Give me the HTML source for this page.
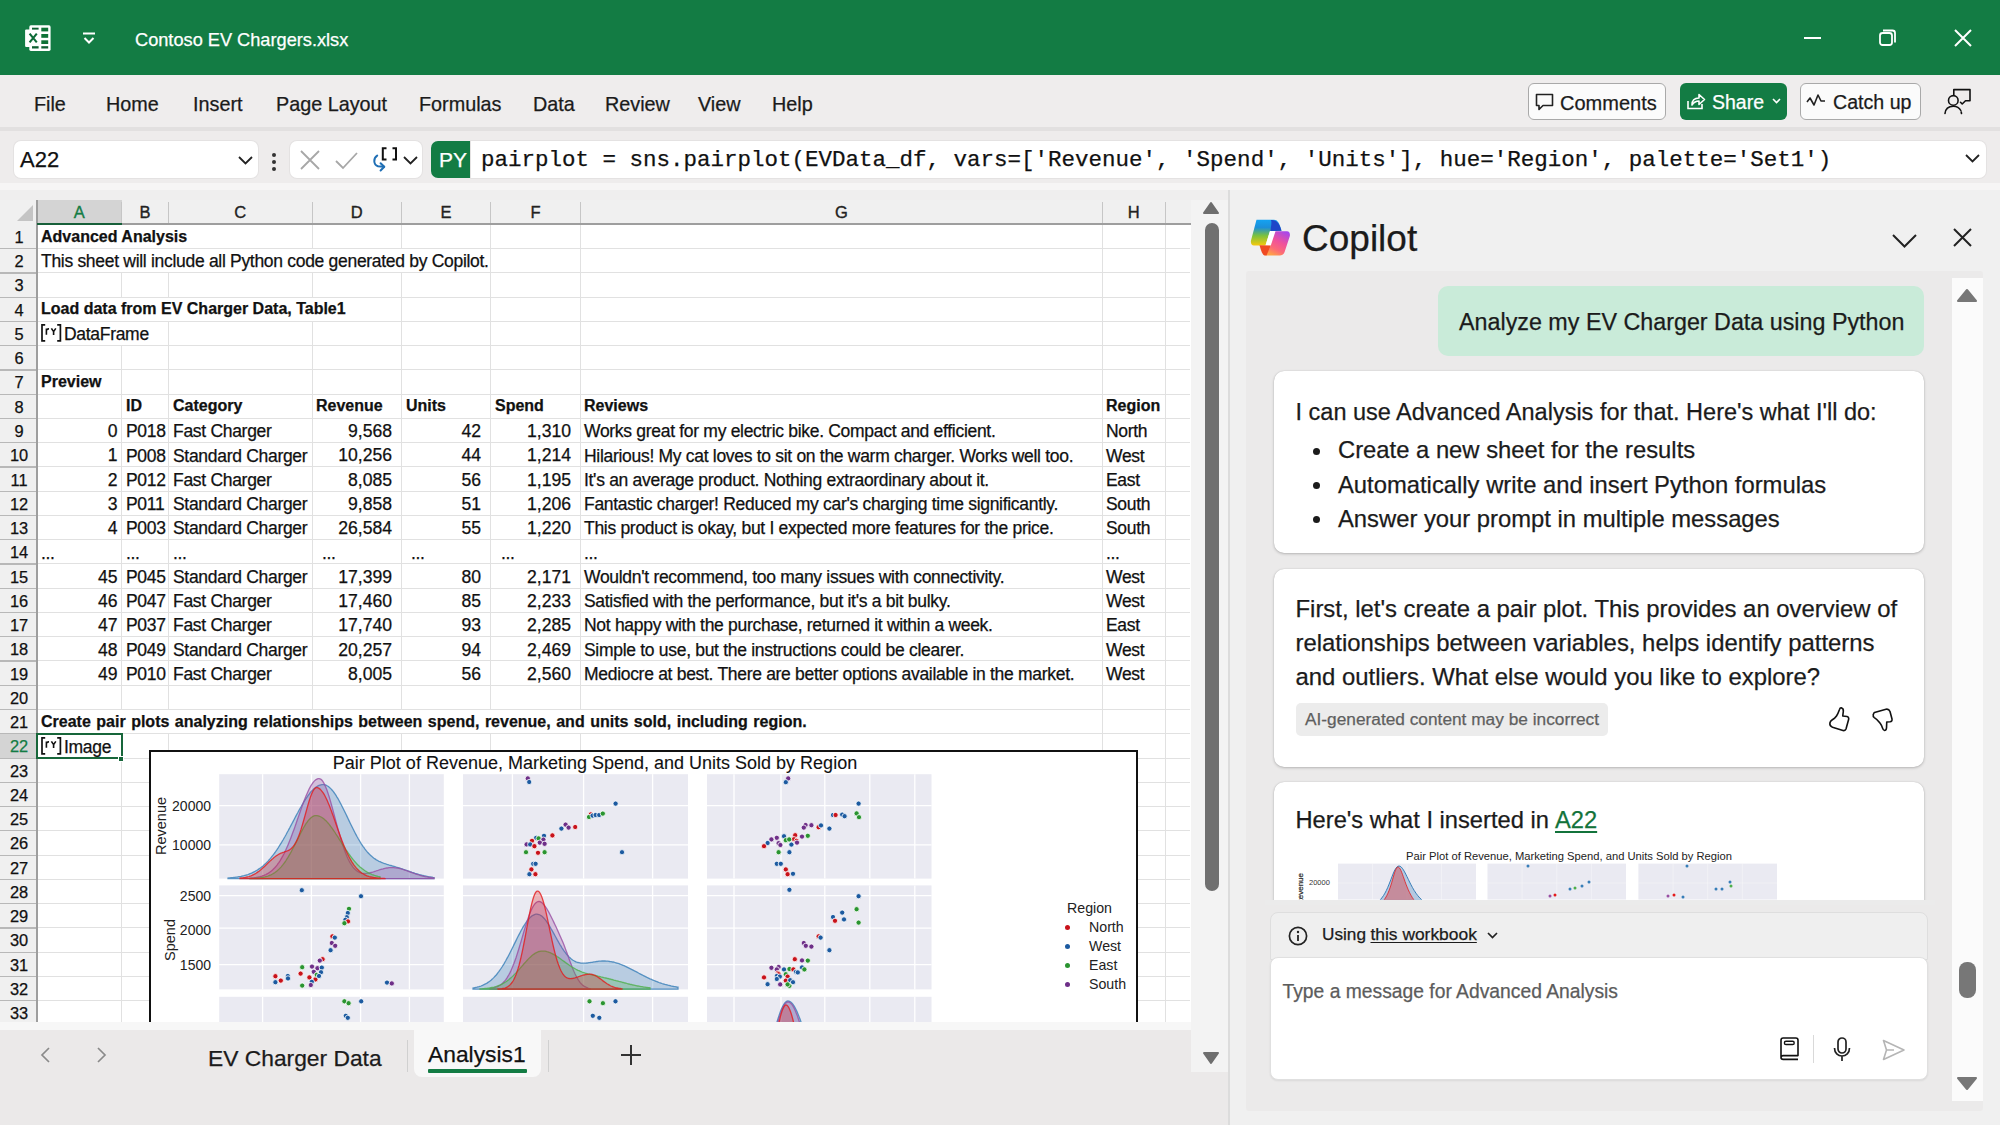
<!DOCTYPE html><html><head><meta charset="utf-8"><style>
html,body{margin:0;padding:0;width:2000px;height:1125px;overflow:hidden;background:#f0f0f0;}
body{position:relative;font-family:"Liberation Sans",sans-serif;}
.t{position:absolute;white-space:pre;-webkit-text-stroke:0.25px currentColor;}
.r{position:absolute;}
svg.r{overflow:visible;}
</style></head><body>
<div class="r" style="left:0.00px;top:0.00px;width:2000.00px;height:75.00px;background:#137c44;"></div>
<svg class="r" style="left:20px;top:20px;" width="36" height="36" viewBox="0 0 36 36"><rect x="9.3" y="5.3" width="21.3" height="25.6" rx="1.6" fill="#fff"/>
<rect x="5.1" y="9.6" width="14" height="17.3" rx="1" fill="#fff"/>
<path d="M9.6 13.6 L16.8 22.4 M16.8 13.6 L9.6 22.4" stroke="#0d6b37" stroke-width="2.1"/>
<rect x="12" y="7.7" width="6.6" height="1.9" fill="#0d5e30"/>
<rect x="12" y="26.2" width="6.6" height="2.3" fill="#0d5e30"/>
<rect x="21.3" y="7.7" width="6.9" height="3.7" fill="#0e7236"/>
<rect x="21.3" y="14" width="6.9" height="3.8" fill="#0e7236"/>
<rect x="21.3" y="20.3" width="6.9" height="3.7" fill="#0e7236"/>
<rect x="21.3" y="26.2" width="6.9" height="2.3" fill="#0d5e30"/></svg>
<svg class="r" style="left:82px;top:32px;" width="14" height="13" viewBox="0 0 14 13"><path d="M1 1.5 H13" stroke="#fff" stroke-width="2"/><path d="M2.5 6 L7 10.5 L11.5 6" fill="none" stroke="#fff" stroke-width="2"/></svg>
<div class="t" style="top:30.59px;font-size:18.2px;line-height:18.2px;color:#fff;font-weight:normal;font-family:'Liberation Sans', sans-serif;left:135.00px;">Contoso EV Chargers.xlsx</div>
<div class="r" style="left:1804.00px;top:37.00px;width:17.00px;height:2.00px;background:#fff;"></div>
<svg class="r" style="left:1879px;top:29px;" width="17" height="17" viewBox="0 0 17 17"><rect x="1" y="4" width="12" height="12" rx="2.5" fill="none" stroke="#fff" stroke-width="1.8"/><path d="M4 1.5 H13.5 A2.5 2.5 0 0 1 16 4 V13.5" fill="none" stroke="#fff" stroke-width="1.8"/></svg>
<svg class="r" style="left:1954px;top:29px;" width="18" height="18" viewBox="0 0 18 18"><path d="M1 1 L17 17 M17 1 L1 17" stroke="#fff" stroke-width="2"/></svg>
<div class="r" style="left:0.00px;top:75.00px;width:2000.00px;height:53.00px;background:#efeded;"></div>
<div class="r" style="left:0.00px;top:127.00px;width:2000.00px;height:4.00px;background:#e2e0e0;"></div>
<div class="t" style="top:95.24px;font-size:19.8px;line-height:19.8px;color:#1b1b1b;font-weight:normal;font-family:'Liberation Sans', sans-serif;left:34.00px;">File</div>
<div class="t" style="top:95.24px;font-size:19.8px;line-height:19.8px;color:#1b1b1b;font-weight:normal;font-family:'Liberation Sans', sans-serif;left:106.00px;">Home</div>
<div class="t" style="top:95.24px;font-size:19.8px;line-height:19.8px;color:#1b1b1b;font-weight:normal;font-family:'Liberation Sans', sans-serif;left:193.00px;">Insert</div>
<div class="t" style="top:95.24px;font-size:19.8px;line-height:19.8px;color:#1b1b1b;font-weight:normal;font-family:'Liberation Sans', sans-serif;left:276.00px;">Page Layout</div>
<div class="t" style="top:95.24px;font-size:19.8px;line-height:19.8px;color:#1b1b1b;font-weight:normal;font-family:'Liberation Sans', sans-serif;left:419.00px;">Formulas</div>
<div class="t" style="top:95.24px;font-size:19.8px;line-height:19.8px;color:#1b1b1b;font-weight:normal;font-family:'Liberation Sans', sans-serif;left:533.00px;">Data</div>
<div class="t" style="top:95.24px;font-size:19.8px;line-height:19.8px;color:#1b1b1b;font-weight:normal;font-family:'Liberation Sans', sans-serif;left:605.00px;">Review</div>
<div class="t" style="top:95.24px;font-size:19.8px;line-height:19.8px;color:#1b1b1b;font-weight:normal;font-family:'Liberation Sans', sans-serif;left:698.00px;">View</div>
<div class="t" style="top:95.24px;font-size:19.8px;line-height:19.8px;color:#1b1b1b;font-weight:normal;font-family:'Liberation Sans', sans-serif;left:772.00px;">Help</div>
<div class="r" style="left:1528.00px;top:83.00px;width:138.00px;height:37.00px;background:#fbfbfb;border:1px solid #a9a9a9;border-radius:6px;box-sizing:border-box;"></div>
<svg class="r" style="left:1535px;top:93px;" width="19" height="18" viewBox="0 0 19 18"><path d="M1.5 1.5 H17.5 V12.5 H8 L4 16.5 V12.5 H1.5 Z" fill="none" stroke="#222" stroke-width="1.6" stroke-linejoin="round"/></svg>
<div class="t" style="top:93.07px;font-size:20px;line-height:20px;color:#1b1b1b;font-weight:normal;font-family:'Liberation Sans', sans-serif;left:1560.00px;">Comments</div>
<div class="r" style="left:1680.00px;top:83.00px;width:107.00px;height:37.00px;background:#137c44;border-radius:6px;"></div>
<svg class="r" style="left:1686px;top:92px;" width="20" height="19" viewBox="0 0 20 19"><path d="M2 9 V16.5 H16 V12" fill="none" stroke="#fff" stroke-width="1.6"/><path d="M6 13 C6 8 9 6 13 6 V2.5 L18.5 7.5 L13 12.5 V9 C10 9 8 10 6 13 Z" fill="none" stroke="#fff" stroke-width="1.6" stroke-linejoin="round"/></svg>
<div class="t" style="top:93.49px;font-size:19.5px;line-height:19.5px;color:#fff;font-weight:normal;font-family:'Liberation Sans', sans-serif;left:1712.00px;">Share</div>
<svg class="r" style="left:1772px;top:98px;" width="9" height="6" viewBox="0 0 9 6"><path d="M1 1 L4.5 4.5 L8 1" fill="none" stroke="#fff" stroke-width="1.6"/></svg>
<div class="r" style="left:1800.00px;top:83.00px;width:121.00px;height:37.00px;background:#fbfbfb;border:1px solid #a9a9a9;border-radius:6px;box-sizing:border-box;"></div>
<svg class="r" style="left:1806px;top:93px;" width="20" height="14" viewBox="0 0 20 14"><path d="M1 9 L4 5 L8 12 L12 2 L15 8 L19 8" fill="none" stroke="#222" stroke-width="1.6" stroke-linejoin="round"/></svg>
<div class="t" style="top:93.41px;font-size:19.6px;line-height:19.6px;color:#1b1b1b;font-weight:normal;font-family:'Liberation Sans', sans-serif;left:1833.00px;">Catch up</div>
<svg class="r" style="left:1940px;top:85px;" width="32" height="30" viewBox="0 0 32 30"><circle cx="13.3" cy="15.4" r="4.8" fill="none" stroke="#111" stroke-width="1.6"/><path d="M5 28.5 C5.5 23.5 9 21.2 13.3 21.2 C16.5 21.2 19.3 22.5 20.8 25.5 M21.5 28.5 L21.2 27" fill="none" stroke="#111" stroke-width="1.6" stroke-linecap="round"/><path d="M13.8 10 V4.6 H30 V15.8 H25.5 L22.2 19 L20.5 17.3" fill="none" stroke="#111" stroke-width="1.6" stroke-linejoin="round" stroke-linecap="round"/></svg>
<div class="r" style="left:0.00px;top:131.00px;width:2000.00px;height:52.00px;background:#eeecec;"></div>
<div class="r" style="left:0.00px;top:183.00px;width:2000.00px;height:7.00px;background:#f6f5f5;"></div>
<div class="r" style="left:0.00px;top:190.00px;width:2000.00px;height:10.00px;background:#efeeee;"></div>
<div class="r" style="left:14.00px;top:141.00px;width:244.00px;height:37.00px;background:#fff;border-radius:7px;box-shadow:0 0 0 1px #e4e2e2;"></div>
<div class="t" style="top:149.38px;font-size:22px;line-height:22px;color:#111;font-weight:normal;font-family:'Liberation Sans', sans-serif;left:20.00px;">A22</div>
<svg class="r" style="left:238px;top:156px;" width="15" height="9" viewBox="0 0 15 9"><path d="M1 1 L7.5 7.5 L14 1" fill="none" stroke="#222" stroke-width="1.8"/></svg>
<div class="r" style="left:272.00px;top:153.00px;width:4.00px;height:3.50px;background:#333;border-radius:2px;"></div>
<div class="r" style="left:272.00px;top:160.00px;width:4.00px;height:3.50px;background:#333;border-radius:2px;"></div>
<div class="r" style="left:272.00px;top:167.00px;width:4.00px;height:3.50px;background:#333;border-radius:2px;"></div>
<div class="r" style="left:290.00px;top:141.00px;width:132.00px;height:37.00px;background:#fff;border-radius:7px;box-shadow:0 0 0 1px #e4e2e2;"></div>
<svg class="r" style="left:300px;top:150px;" width="20" height="20" viewBox="0 0 20 20"><path d="M1 1 L19 19 M19 1 L1 19" stroke="#a7a7a7" stroke-width="1.8"/></svg>
<svg class="r" style="left:335px;top:150px;" width="23" height="20" viewBox="0 0 23 20"><path d="M1 11 L8 18 L22 3" fill="none" stroke="#a7a7a7" stroke-width="1.8"/></svg>
<svg class="r" style="left:371px;top:147px;" width="27" height="25" viewBox="0 0 27 25"><path d="M6.2 8.6 C2.2 11 2.2 17.5 7 19.3 L13 19.8" fill="none" stroke="#1f6fb5" stroke-width="2" stroke-linecap="round"/><path d="M9.6 16.2 L13.3 19.8 L9.6 23.5" fill="none" stroke="#1f6fb5" stroke-width="2" stroke-linecap="round" stroke-linejoin="round"/><path d="M15.5 1.2 H11.8 V12.4 H15.5 M21.5 1.2 H25 V12.4 H21.5" fill="none" stroke="#111" stroke-width="2"/></svg>
<svg class="r" style="left:403px;top:156px;" width="15" height="9" viewBox="0 0 15 9"><path d="M1 1 L7.5 7.5 L14 1" fill="none" stroke="#222" stroke-width="1.8"/></svg>
<div class="r" style="left:431.00px;top:141.00px;width:40.00px;height:37.00px;background:#137c44;border-radius:7px 0 0 7px;"></div>
<div class="t" style="top:149.22px;font-size:21px;line-height:21px;color:#fff;font-weight:normal;font-family:'Liberation Sans', sans-serif;left:439.00px;">PY</div>
<div class="r" style="left:471.00px;top:141.00px;width:1515.00px;height:37.00px;background:#fff;border-radius:0 7px 7px 0;box-shadow:0 0 0 1px #e4e2e2;"></div>
<div class="t" style="top:148.95px;font-size:22.5px;line-height:22.5px;color:#111;font-weight:normal;font-family:'Liberation Mono', monospace;left:481.00px;">pairplot = sns.pairplot(EVData_df, vars=['Revenue', 'Spend', 'Units'], hue='Region', palette='Set1')</div>
<svg class="r" style="left:1965px;top:154px;" width="15" height="9" viewBox="0 0 15 9"><path d="M1 1 L7.5 7.5 L14 1" fill="none" stroke="#222" stroke-width="1.8"/></svg>
<div class="r" style="left:0.00px;top:200.00px;width:1195.00px;height:822.00px;background:#fff;"></div>
<div class="r" style="left:0.00px;top:200.00px;width:1190.50px;height:24.30px;background:#f0f0f0;"></div>
<div class="r" style="left:0.00px;top:224.30px;width:37.00px;height:797.70px;background:#f0f0f0;"></div>
<div class="r" style="left:37.00px;top:200.00px;width:84.50px;height:24.30px;background:#d4d4d4;"></div>
<div class="r" style="left:0.00px;top:733.76px;width:37.00px;height:24.26px;background:#d4d4d4;"></div>
<svg class="r" style="left:17px;top:205px;" width="16" height="16" viewBox="0 0 16 16"><path d="M16 0 V16 H0 Z" fill="#c4c4c4"/></svg>
<div class="r" style="left:37px;top:248.06px;width:1153px;height:1px;background:#e1e1e1;"></div>
<div class="r" style="left:0px;top:248.06px;width:37px;height:1.2px;background:#b8b8b8;"></div>
<div class="r" style="left:37px;top:272.32px;width:1153px;height:1px;background:#e1e1e1;"></div>
<div class="r" style="left:0px;top:272.32px;width:37px;height:1.2px;background:#b8b8b8;"></div>
<div class="r" style="left:37px;top:296.58px;width:1153px;height:1px;background:#e1e1e1;"></div>
<div class="r" style="left:0px;top:296.58px;width:37px;height:1.2px;background:#b8b8b8;"></div>
<div class="r" style="left:37px;top:320.84px;width:1153px;height:1px;background:#e1e1e1;"></div>
<div class="r" style="left:0px;top:320.84px;width:37px;height:1.2px;background:#b8b8b8;"></div>
<div class="r" style="left:37px;top:345.10px;width:1153px;height:1px;background:#e1e1e1;"></div>
<div class="r" style="left:0px;top:345.10px;width:37px;height:1.2px;background:#b8b8b8;"></div>
<div class="r" style="left:37px;top:369.36px;width:1153px;height:1px;background:#e1e1e1;"></div>
<div class="r" style="left:0px;top:369.36px;width:37px;height:1.2px;background:#b8b8b8;"></div>
<div class="r" style="left:37px;top:393.62px;width:1153px;height:1px;background:#e1e1e1;"></div>
<div class="r" style="left:0px;top:393.62px;width:37px;height:1.2px;background:#b8b8b8;"></div>
<div class="r" style="left:37px;top:417.88px;width:1153px;height:1px;background:#e1e1e1;"></div>
<div class="r" style="left:0px;top:417.88px;width:37px;height:1.2px;background:#b8b8b8;"></div>
<div class="r" style="left:37px;top:442.14px;width:1153px;height:1px;background:#e1e1e1;"></div>
<div class="r" style="left:0px;top:442.14px;width:37px;height:1.2px;background:#b8b8b8;"></div>
<div class="r" style="left:37px;top:466.40px;width:1153px;height:1px;background:#e1e1e1;"></div>
<div class="r" style="left:0px;top:466.40px;width:37px;height:1.2px;background:#b8b8b8;"></div>
<div class="r" style="left:37px;top:490.66px;width:1153px;height:1px;background:#e1e1e1;"></div>
<div class="r" style="left:0px;top:490.66px;width:37px;height:1.2px;background:#b8b8b8;"></div>
<div class="r" style="left:37px;top:514.92px;width:1153px;height:1px;background:#e1e1e1;"></div>
<div class="r" style="left:0px;top:514.92px;width:37px;height:1.2px;background:#b8b8b8;"></div>
<div class="r" style="left:37px;top:539.18px;width:1153px;height:1px;background:#e1e1e1;"></div>
<div class="r" style="left:0px;top:539.18px;width:37px;height:1.2px;background:#b8b8b8;"></div>
<div class="r" style="left:37px;top:563.44px;width:1153px;height:1px;background:#e1e1e1;"></div>
<div class="r" style="left:0px;top:563.44px;width:37px;height:1.2px;background:#b8b8b8;"></div>
<div class="r" style="left:37px;top:587.70px;width:1153px;height:1px;background:#e1e1e1;"></div>
<div class="r" style="left:0px;top:587.70px;width:37px;height:1.2px;background:#b8b8b8;"></div>
<div class="r" style="left:37px;top:611.96px;width:1153px;height:1px;background:#e1e1e1;"></div>
<div class="r" style="left:0px;top:611.96px;width:37px;height:1.2px;background:#b8b8b8;"></div>
<div class="r" style="left:37px;top:636.22px;width:1153px;height:1px;background:#e1e1e1;"></div>
<div class="r" style="left:0px;top:636.22px;width:37px;height:1.2px;background:#b8b8b8;"></div>
<div class="r" style="left:37px;top:660.48px;width:1153px;height:1px;background:#e1e1e1;"></div>
<div class="r" style="left:0px;top:660.48px;width:37px;height:1.2px;background:#b8b8b8;"></div>
<div class="r" style="left:37px;top:684.74px;width:1153px;height:1px;background:#e1e1e1;"></div>
<div class="r" style="left:0px;top:684.74px;width:37px;height:1.2px;background:#b8b8b8;"></div>
<div class="r" style="left:37px;top:709.00px;width:1153px;height:1px;background:#e1e1e1;"></div>
<div class="r" style="left:0px;top:709.00px;width:37px;height:1.2px;background:#b8b8b8;"></div>
<div class="r" style="left:37px;top:733.26px;width:1153px;height:1px;background:#e1e1e1;"></div>
<div class="r" style="left:0px;top:733.26px;width:37px;height:1.2px;background:#b8b8b8;"></div>
<div class="r" style="left:37px;top:757.52px;width:1153px;height:1px;background:#e1e1e1;"></div>
<div class="r" style="left:0px;top:757.52px;width:37px;height:1.2px;background:#b8b8b8;"></div>
<div class="r" style="left:37px;top:781.78px;width:1153px;height:1px;background:#e1e1e1;"></div>
<div class="r" style="left:0px;top:781.78px;width:37px;height:1.2px;background:#b8b8b8;"></div>
<div class="r" style="left:37px;top:806.04px;width:1153px;height:1px;background:#e1e1e1;"></div>
<div class="r" style="left:0px;top:806.04px;width:37px;height:1.2px;background:#b8b8b8;"></div>
<div class="r" style="left:37px;top:830.30px;width:1153px;height:1px;background:#e1e1e1;"></div>
<div class="r" style="left:0px;top:830.30px;width:37px;height:1.2px;background:#b8b8b8;"></div>
<div class="r" style="left:37px;top:854.56px;width:1153px;height:1px;background:#e1e1e1;"></div>
<div class="r" style="left:0px;top:854.56px;width:37px;height:1.2px;background:#b8b8b8;"></div>
<div class="r" style="left:37px;top:878.82px;width:1153px;height:1px;background:#e1e1e1;"></div>
<div class="r" style="left:0px;top:878.82px;width:37px;height:1.2px;background:#b8b8b8;"></div>
<div class="r" style="left:37px;top:903.08px;width:1153px;height:1px;background:#e1e1e1;"></div>
<div class="r" style="left:0px;top:903.08px;width:37px;height:1.2px;background:#b8b8b8;"></div>
<div class="r" style="left:37px;top:927.34px;width:1153px;height:1px;background:#e1e1e1;"></div>
<div class="r" style="left:0px;top:927.34px;width:37px;height:1.2px;background:#b8b8b8;"></div>
<div class="r" style="left:37px;top:951.60px;width:1153px;height:1px;background:#e1e1e1;"></div>
<div class="r" style="left:0px;top:951.60px;width:37px;height:1.2px;background:#b8b8b8;"></div>
<div class="r" style="left:37px;top:975.86px;width:1153px;height:1px;background:#e1e1e1;"></div>
<div class="r" style="left:0px;top:975.86px;width:37px;height:1.2px;background:#b8b8b8;"></div>
<div class="r" style="left:37px;top:1000.12px;width:1153px;height:1px;background:#e1e1e1;"></div>
<div class="r" style="left:0px;top:1000.12px;width:37px;height:1.2px;background:#b8b8b8;"></div>
<div class="r" style="left:121.00px;top:224.3px;width:1px;height:797.7px;background:#e1e1e1;"></div>
<div class="r" style="left:121.00px;top:202px;width:1px;height:22.30000000000001px;background:#c6c6c6;"></div>
<div class="r" style="left:168.00px;top:224.3px;width:1px;height:797.7px;background:#e1e1e1;"></div>
<div class="r" style="left:168.00px;top:202px;width:1px;height:22.30000000000001px;background:#c6c6c6;"></div>
<div class="r" style="left:311.50px;top:224.3px;width:1px;height:797.7px;background:#e1e1e1;"></div>
<div class="r" style="left:311.50px;top:202px;width:1px;height:22.30000000000001px;background:#c6c6c6;"></div>
<div class="r" style="left:400.80px;top:224.3px;width:1px;height:797.7px;background:#e1e1e1;"></div>
<div class="r" style="left:400.80px;top:202px;width:1px;height:22.30000000000001px;background:#c6c6c6;"></div>
<div class="r" style="left:490.20px;top:224.3px;width:1px;height:797.7px;background:#e1e1e1;"></div>
<div class="r" style="left:490.20px;top:202px;width:1px;height:22.30000000000001px;background:#c6c6c6;"></div>
<div class="r" style="left:579.80px;top:224.3px;width:1px;height:797.7px;background:#e1e1e1;"></div>
<div class="r" style="left:579.80px;top:202px;width:1px;height:22.30000000000001px;background:#c6c6c6;"></div>
<div class="r" style="left:1101.80px;top:224.3px;width:1px;height:797.7px;background:#e1e1e1;"></div>
<div class="r" style="left:1101.80px;top:202px;width:1px;height:22.30000000000001px;background:#c6c6c6;"></div>
<div class="r" style="left:1164.80px;top:224.3px;width:1px;height:797.7px;background:#e1e1e1;"></div>
<div class="r" style="left:1164.80px;top:202px;width:1px;height:22.30000000000001px;background:#c6c6c6;"></div>
<div class="r" style="left:37.00px;top:222.80px;width:1153.50px;height:2.00px;background:#9e9e9e;"></div>
<div class="r" style="left:36.00px;top:200.00px;width:1.50px;height:822.00px;background:#9e9e9e;"></div>
<div class="r" style="left:37.00px;top:222.50px;width:84.50px;height:2.00px;background:#17603a;"></div>
<div class="r" style="left:35.50px;top:733.76px;width:2.00px;height:24.26px;background:#137c44;"></div>
<div class="t" style="top:204.03px;font-size:16.5px;line-height:16.5px;color:#137c44;font-weight:normal;font-family:'Liberation Sans', sans-serif;left:-420.75px;width:1000px;text-align:center;-webkit-text-stroke:0.35px;">A</div>
<div class="t" style="top:204.03px;font-size:16.5px;line-height:16.5px;color:#222;font-weight:normal;font-family:'Liberation Sans', sans-serif;left:-355.00px;width:1000px;text-align:center;-webkit-text-stroke:0.35px;">B</div>
<div class="t" style="top:204.03px;font-size:16.5px;line-height:16.5px;color:#222;font-weight:normal;font-family:'Liberation Sans', sans-serif;left:-259.75px;width:1000px;text-align:center;-webkit-text-stroke:0.35px;">C</div>
<div class="t" style="top:204.03px;font-size:16.5px;line-height:16.5px;color:#222;font-weight:normal;font-family:'Liberation Sans', sans-serif;left:-143.35px;width:1000px;text-align:center;-webkit-text-stroke:0.35px;">D</div>
<div class="t" style="top:204.03px;font-size:16.5px;line-height:16.5px;color:#222;font-weight:normal;font-family:'Liberation Sans', sans-serif;left:-54.00px;width:1000px;text-align:center;-webkit-text-stroke:0.35px;">E</div>
<div class="t" style="top:204.03px;font-size:16.5px;line-height:16.5px;color:#222;font-weight:normal;font-family:'Liberation Sans', sans-serif;left:35.50px;width:1000px;text-align:center;-webkit-text-stroke:0.35px;">F</div>
<div class="t" style="top:204.03px;font-size:16.5px;line-height:16.5px;color:#222;font-weight:normal;font-family:'Liberation Sans', sans-serif;left:341.30px;width:1000px;text-align:center;-webkit-text-stroke:0.35px;">G</div>
<div class="t" style="top:204.03px;font-size:16.5px;line-height:16.5px;color:#222;font-weight:normal;font-family:'Liberation Sans', sans-serif;left:633.80px;width:1000px;text-align:center;-webkit-text-stroke:0.35px;">H</div>
<div class="t" style="top:228.92px;font-size:16.4px;line-height:16.4px;color:#111;font-weight:normal;font-family:'Liberation Sans', sans-serif;left:-481.00px;width:1000px;text-align:center;">1</div>
<div class="t" style="top:253.18px;font-size:16.4px;line-height:16.4px;color:#111;font-weight:normal;font-family:'Liberation Sans', sans-serif;left:-481.00px;width:1000px;text-align:center;">2</div>
<div class="t" style="top:277.44px;font-size:16.4px;line-height:16.4px;color:#111;font-weight:normal;font-family:'Liberation Sans', sans-serif;left:-481.00px;width:1000px;text-align:center;">3</div>
<div class="t" style="top:301.70px;font-size:16.4px;line-height:16.4px;color:#111;font-weight:normal;font-family:'Liberation Sans', sans-serif;left:-481.00px;width:1000px;text-align:center;">4</div>
<div class="t" style="top:325.96px;font-size:16.4px;line-height:16.4px;color:#111;font-weight:normal;font-family:'Liberation Sans', sans-serif;left:-481.00px;width:1000px;text-align:center;">5</div>
<div class="t" style="top:350.22px;font-size:16.4px;line-height:16.4px;color:#111;font-weight:normal;font-family:'Liberation Sans', sans-serif;left:-481.00px;width:1000px;text-align:center;">6</div>
<div class="t" style="top:374.48px;font-size:16.4px;line-height:16.4px;color:#111;font-weight:normal;font-family:'Liberation Sans', sans-serif;left:-481.00px;width:1000px;text-align:center;">7</div>
<div class="t" style="top:398.74px;font-size:16.4px;line-height:16.4px;color:#111;font-weight:normal;font-family:'Liberation Sans', sans-serif;left:-481.00px;width:1000px;text-align:center;">8</div>
<div class="t" style="top:423.00px;font-size:16.4px;line-height:16.4px;color:#111;font-weight:normal;font-family:'Liberation Sans', sans-serif;left:-481.00px;width:1000px;text-align:center;">9</div>
<div class="t" style="top:447.26px;font-size:16.4px;line-height:16.4px;color:#111;font-weight:normal;font-family:'Liberation Sans', sans-serif;left:-481.00px;width:1000px;text-align:center;">10</div>
<div class="t" style="top:471.52px;font-size:16.4px;line-height:16.4px;color:#111;font-weight:normal;font-family:'Liberation Sans', sans-serif;left:-481.00px;width:1000px;text-align:center;">11</div>
<div class="t" style="top:495.78px;font-size:16.4px;line-height:16.4px;color:#111;font-weight:normal;font-family:'Liberation Sans', sans-serif;left:-481.00px;width:1000px;text-align:center;">12</div>
<div class="t" style="top:520.04px;font-size:16.4px;line-height:16.4px;color:#111;font-weight:normal;font-family:'Liberation Sans', sans-serif;left:-481.00px;width:1000px;text-align:center;">13</div>
<div class="t" style="top:544.30px;font-size:16.4px;line-height:16.4px;color:#111;font-weight:normal;font-family:'Liberation Sans', sans-serif;left:-481.00px;width:1000px;text-align:center;">14</div>
<div class="t" style="top:568.56px;font-size:16.4px;line-height:16.4px;color:#111;font-weight:normal;font-family:'Liberation Sans', sans-serif;left:-481.00px;width:1000px;text-align:center;">15</div>
<div class="t" style="top:592.82px;font-size:16.4px;line-height:16.4px;color:#111;font-weight:normal;font-family:'Liberation Sans', sans-serif;left:-481.00px;width:1000px;text-align:center;">16</div>
<div class="t" style="top:617.08px;font-size:16.4px;line-height:16.4px;color:#111;font-weight:normal;font-family:'Liberation Sans', sans-serif;left:-481.00px;width:1000px;text-align:center;">17</div>
<div class="t" style="top:641.34px;font-size:16.4px;line-height:16.4px;color:#111;font-weight:normal;font-family:'Liberation Sans', sans-serif;left:-481.00px;width:1000px;text-align:center;">18</div>
<div class="t" style="top:665.60px;font-size:16.4px;line-height:16.4px;color:#111;font-weight:normal;font-family:'Liberation Sans', sans-serif;left:-481.00px;width:1000px;text-align:center;">19</div>
<div class="t" style="top:689.86px;font-size:16.4px;line-height:16.4px;color:#111;font-weight:normal;font-family:'Liberation Sans', sans-serif;left:-481.00px;width:1000px;text-align:center;">20</div>
<div class="t" style="top:714.12px;font-size:16.4px;line-height:16.4px;color:#111;font-weight:normal;font-family:'Liberation Sans', sans-serif;left:-481.00px;width:1000px;text-align:center;">21</div>
<div class="t" style="top:738.38px;font-size:16.4px;line-height:16.4px;color:#137c44;font-weight:normal;font-family:'Liberation Sans', sans-serif;left:-481.00px;width:1000px;text-align:center;">22</div>
<div class="t" style="top:762.64px;font-size:16.4px;line-height:16.4px;color:#111;font-weight:normal;font-family:'Liberation Sans', sans-serif;left:-481.00px;width:1000px;text-align:center;">23</div>
<div class="t" style="top:786.90px;font-size:16.4px;line-height:16.4px;color:#111;font-weight:normal;font-family:'Liberation Sans', sans-serif;left:-481.00px;width:1000px;text-align:center;">24</div>
<div class="t" style="top:811.16px;font-size:16.4px;line-height:16.4px;color:#111;font-weight:normal;font-family:'Liberation Sans', sans-serif;left:-481.00px;width:1000px;text-align:center;">25</div>
<div class="t" style="top:835.42px;font-size:16.4px;line-height:16.4px;color:#111;font-weight:normal;font-family:'Liberation Sans', sans-serif;left:-481.00px;width:1000px;text-align:center;">26</div>
<div class="t" style="top:859.68px;font-size:16.4px;line-height:16.4px;color:#111;font-weight:normal;font-family:'Liberation Sans', sans-serif;left:-481.00px;width:1000px;text-align:center;">27</div>
<div class="t" style="top:883.94px;font-size:16.4px;line-height:16.4px;color:#111;font-weight:normal;font-family:'Liberation Sans', sans-serif;left:-481.00px;width:1000px;text-align:center;">28</div>
<div class="t" style="top:908.20px;font-size:16.4px;line-height:16.4px;color:#111;font-weight:normal;font-family:'Liberation Sans', sans-serif;left:-481.00px;width:1000px;text-align:center;">29</div>
<div class="t" style="top:932.46px;font-size:16.4px;line-height:16.4px;color:#111;font-weight:normal;font-family:'Liberation Sans', sans-serif;left:-481.00px;width:1000px;text-align:center;">30</div>
<div class="t" style="top:956.72px;font-size:16.4px;line-height:16.4px;color:#111;font-weight:normal;font-family:'Liberation Sans', sans-serif;left:-481.00px;width:1000px;text-align:center;">31</div>
<div class="t" style="top:980.98px;font-size:16.4px;line-height:16.4px;color:#111;font-weight:normal;font-family:'Liberation Sans', sans-serif;left:-481.00px;width:1000px;text-align:center;">32</div>
<div class="t" style="top:1005.24px;font-size:16.4px;line-height:16.4px;color:#111;font-weight:normal;font-family:'Liberation Sans', sans-serif;left:-481.00px;width:1000px;text-align:center;">33</div>
<div class="r" style="left:120.00px;top:224.90px;width:50.00px;height:23.06px;background:#fff;"></div>
<div class="r" style="left:120.00px;top:249.16px;width:283.00px;height:23.06px;background:#fff;"></div>
<div class="r" style="left:120.00px;top:297.68px;width:194.00px;height:23.06px;background:#fff;"></div>
<div class="r" style="left:120.00px;top:321.94px;width:3.00px;height:23.06px;background:#fff;"></div>
<div class="r" style="left:120.00px;top:710.10px;width:462.00px;height:23.06px;background:#fff;"></div>
<div class="t" style="top:228.66px;font-size:16px;line-height:16px;color:#111;font-weight:bold;font-family:'Liberation Sans', sans-serif;left:41.00px;">Advanced Analysis</div>
<div class="t" style="top:253.45px;font-size:17.5px;line-height:17.5px;color:#111;font-weight:normal;font-family:'Liberation Sans', sans-serif;left:41.00px;letter-spacing:-0.3px;">This sheet will include all Python code generated by Copilot.</div>
<div class="t" style="top:301.44px;font-size:16px;line-height:16px;color:#111;font-weight:bold;font-family:'Liberation Sans', sans-serif;left:41.00px;">Load data from EV Charger Data, Table1</div>
<div class="t" style="top:374.22px;font-size:16px;line-height:16px;color:#111;font-weight:bold;font-family:'Liberation Sans', sans-serif;left:41.00px;">Preview</div>
<div class="t" style="top:713.86px;font-size:16px;line-height:16px;color:#111;font-weight:bold;font-family:'Liberation Sans', sans-serif;left:41.00px;word-spacing:1.05px;">Create pair plots analyzing relationships between spend, revenue, and units sold, including region.</div>
<svg class="r" style="left:40px;top:324.24px;" width="22" height="18" viewBox="0 0 22 18"><path d="M5.2 0.8 H2 V16.8 H5.2 M17.2 0.8 H20.4 V16.8 H17.2" fill="none" stroke="#111" stroke-width="1.7"/><path d="M6.4 4.6 V10.8 M6.4 6.6 C6.8 5.2 7.8 4.8 9 4.9" fill="none" stroke="#111" stroke-width="1.6"/><path d="M11.4 4.4 L13.6 7.6 L15.8 4.4 M13.6 7.6 V11" fill="none" stroke="#111" stroke-width="1.6"/></svg>
<div class="t" style="top:326.23px;font-size:17.5px;line-height:17.5px;color:#111;font-weight:normal;font-family:'Liberation Sans', sans-serif;left:64.00px;letter-spacing:-0.3px;">DataFrame</div>
<svg class="r" style="left:40px;top:736.66px;" width="22" height="18" viewBox="0 0 22 18"><path d="M5.2 0.8 H2 V16.8 H5.2 M17.2 0.8 H20.4 V16.8 H17.2" fill="none" stroke="#111" stroke-width="1.7"/><path d="M6.4 4.6 V10.8 M6.4 6.6 C6.8 5.2 7.8 4.8 9 4.9" fill="none" stroke="#111" stroke-width="1.6"/><path d="M11.4 4.4 L13.6 7.6 L15.8 4.4 M13.6 7.6 V11" fill="none" stroke="#111" stroke-width="1.6"/></svg>
<div class="t" style="top:738.65px;font-size:17.5px;line-height:17.5px;color:#111;font-weight:normal;font-family:'Liberation Sans', sans-serif;left:64.00px;letter-spacing:-0.3px;">Image</div>
<div class="t" style="top:398.48px;font-size:16px;line-height:16px;color:#111;font-weight:bold;font-family:'Liberation Sans', sans-serif;left:126.00px;">ID</div>
<div class="t" style="top:398.48px;font-size:16px;line-height:16px;color:#111;font-weight:bold;font-family:'Liberation Sans', sans-serif;left:173.00px;">Category</div>
<div class="t" style="top:398.48px;font-size:16px;line-height:16px;color:#111;font-weight:bold;font-family:'Liberation Sans', sans-serif;left:316.00px;">Revenue</div>
<div class="t" style="top:398.48px;font-size:16px;line-height:16px;color:#111;font-weight:bold;font-family:'Liberation Sans', sans-serif;left:406.00px;">Units</div>
<div class="t" style="top:398.48px;font-size:16px;line-height:16px;color:#111;font-weight:bold;font-family:'Liberation Sans', sans-serif;left:495.00px;">Spend</div>
<div class="t" style="top:398.48px;font-size:16px;line-height:16px;color:#111;font-weight:bold;font-family:'Liberation Sans', sans-serif;left:584.00px;">Reviews</div>
<div class="t" style="top:398.48px;font-size:16px;line-height:16px;color:#111;font-weight:bold;font-family:'Liberation Sans', sans-serif;left:1106.00px;">Region</div>
<div class="t" style="top:423.18px;font-size:17.6px;line-height:17.6px;color:#111;font-weight:normal;font-family:'Liberation Sans', sans-serif;right:1882.50px;">0</div>
<div class="t" style="top:423.27px;font-size:17.5px;line-height:17.5px;color:#111;font-weight:normal;font-family:'Liberation Sans', sans-serif;left:126.00px;letter-spacing:-0.3px;">P018</div>
<div class="t" style="top:423.27px;font-size:17.5px;line-height:17.5px;color:#111;font-weight:normal;font-family:'Liberation Sans', sans-serif;left:173.00px;letter-spacing:-0.3px;">Fast Charger</div>
<div class="t" style="top:423.18px;font-size:17.6px;line-height:17.6px;color:#111;font-weight:normal;font-family:'Liberation Sans', sans-serif;right:1608.00px;">9,568</div>
<div class="t" style="top:423.18px;font-size:17.6px;line-height:17.6px;color:#111;font-weight:normal;font-family:'Liberation Sans', sans-serif;right:1519.00px;">42</div>
<div class="t" style="top:423.18px;font-size:17.6px;line-height:17.6px;color:#111;font-weight:normal;font-family:'Liberation Sans', sans-serif;right:1429.00px;">1,310</div>
<div class="t" style="top:423.27px;font-size:17.5px;line-height:17.5px;color:#111;font-weight:normal;font-family:'Liberation Sans', sans-serif;left:584.00px;letter-spacing:-0.3px;">Works great for my electric bike. Compact and efficient.</div>
<div class="t" style="top:423.27px;font-size:17.5px;line-height:17.5px;color:#111;font-weight:normal;font-family:'Liberation Sans', sans-serif;left:1106.00px;letter-spacing:-0.3px;">North</div>
<div class="t" style="top:447.44px;font-size:17.6px;line-height:17.6px;color:#111;font-weight:normal;font-family:'Liberation Sans', sans-serif;right:1882.50px;">1</div>
<div class="t" style="top:447.53px;font-size:17.5px;line-height:17.5px;color:#111;font-weight:normal;font-family:'Liberation Sans', sans-serif;left:126.00px;letter-spacing:-0.3px;">P008</div>
<div class="t" style="top:447.53px;font-size:17.5px;line-height:17.5px;color:#111;font-weight:normal;font-family:'Liberation Sans', sans-serif;left:173.00px;letter-spacing:-0.3px;">Standard Charger</div>
<div class="t" style="top:447.44px;font-size:17.6px;line-height:17.6px;color:#111;font-weight:normal;font-family:'Liberation Sans', sans-serif;right:1608.00px;">10,256</div>
<div class="t" style="top:447.44px;font-size:17.6px;line-height:17.6px;color:#111;font-weight:normal;font-family:'Liberation Sans', sans-serif;right:1519.00px;">44</div>
<div class="t" style="top:447.44px;font-size:17.6px;line-height:17.6px;color:#111;font-weight:normal;font-family:'Liberation Sans', sans-serif;right:1429.00px;">1,214</div>
<div class="t" style="top:447.53px;font-size:17.5px;line-height:17.5px;color:#111;font-weight:normal;font-family:'Liberation Sans', sans-serif;left:584.00px;letter-spacing:-0.3px;">Hilarious! My cat loves to sit on the warm charger. Works well too.</div>
<div class="t" style="top:447.53px;font-size:17.5px;line-height:17.5px;color:#111;font-weight:normal;font-family:'Liberation Sans', sans-serif;left:1106.00px;letter-spacing:-0.3px;">West</div>
<div class="t" style="top:471.70px;font-size:17.6px;line-height:17.6px;color:#111;font-weight:normal;font-family:'Liberation Sans', sans-serif;right:1882.50px;">2</div>
<div class="t" style="top:471.79px;font-size:17.5px;line-height:17.5px;color:#111;font-weight:normal;font-family:'Liberation Sans', sans-serif;left:126.00px;letter-spacing:-0.3px;">P012</div>
<div class="t" style="top:471.79px;font-size:17.5px;line-height:17.5px;color:#111;font-weight:normal;font-family:'Liberation Sans', sans-serif;left:173.00px;letter-spacing:-0.3px;">Fast Charger</div>
<div class="t" style="top:471.70px;font-size:17.6px;line-height:17.6px;color:#111;font-weight:normal;font-family:'Liberation Sans', sans-serif;right:1608.00px;">8,085</div>
<div class="t" style="top:471.70px;font-size:17.6px;line-height:17.6px;color:#111;font-weight:normal;font-family:'Liberation Sans', sans-serif;right:1519.00px;">56</div>
<div class="t" style="top:471.70px;font-size:17.6px;line-height:17.6px;color:#111;font-weight:normal;font-family:'Liberation Sans', sans-serif;right:1429.00px;">1,195</div>
<div class="t" style="top:471.79px;font-size:17.5px;line-height:17.5px;color:#111;font-weight:normal;font-family:'Liberation Sans', sans-serif;left:584.00px;letter-spacing:-0.3px;">It's an average product. Nothing extraordinary about it.</div>
<div class="t" style="top:471.79px;font-size:17.5px;line-height:17.5px;color:#111;font-weight:normal;font-family:'Liberation Sans', sans-serif;left:1106.00px;letter-spacing:-0.3px;">East</div>
<div class="t" style="top:495.96px;font-size:17.6px;line-height:17.6px;color:#111;font-weight:normal;font-family:'Liberation Sans', sans-serif;right:1882.50px;">3</div>
<div class="t" style="top:496.05px;font-size:17.5px;line-height:17.5px;color:#111;font-weight:normal;font-family:'Liberation Sans', sans-serif;left:126.00px;letter-spacing:-0.3px;">P011</div>
<div class="t" style="top:496.05px;font-size:17.5px;line-height:17.5px;color:#111;font-weight:normal;font-family:'Liberation Sans', sans-serif;left:173.00px;letter-spacing:-0.3px;">Standard Charger</div>
<div class="t" style="top:495.96px;font-size:17.6px;line-height:17.6px;color:#111;font-weight:normal;font-family:'Liberation Sans', sans-serif;right:1608.00px;">9,858</div>
<div class="t" style="top:495.96px;font-size:17.6px;line-height:17.6px;color:#111;font-weight:normal;font-family:'Liberation Sans', sans-serif;right:1519.00px;">51</div>
<div class="t" style="top:495.96px;font-size:17.6px;line-height:17.6px;color:#111;font-weight:normal;font-family:'Liberation Sans', sans-serif;right:1429.00px;">1,206</div>
<div class="t" style="top:496.05px;font-size:17.5px;line-height:17.5px;color:#111;font-weight:normal;font-family:'Liberation Sans', sans-serif;left:584.00px;letter-spacing:-0.3px;">Fantastic charger! Reduced my car's charging time significantly.</div>
<div class="t" style="top:496.05px;font-size:17.5px;line-height:17.5px;color:#111;font-weight:normal;font-family:'Liberation Sans', sans-serif;left:1106.00px;letter-spacing:-0.3px;">South</div>
<div class="t" style="top:520.22px;font-size:17.6px;line-height:17.6px;color:#111;font-weight:normal;font-family:'Liberation Sans', sans-serif;right:1882.50px;">4</div>
<div class="t" style="top:520.31px;font-size:17.5px;line-height:17.5px;color:#111;font-weight:normal;font-family:'Liberation Sans', sans-serif;left:126.00px;letter-spacing:-0.3px;">P003</div>
<div class="t" style="top:520.31px;font-size:17.5px;line-height:17.5px;color:#111;font-weight:normal;font-family:'Liberation Sans', sans-serif;left:173.00px;letter-spacing:-0.3px;">Standard Charger</div>
<div class="t" style="top:520.22px;font-size:17.6px;line-height:17.6px;color:#111;font-weight:normal;font-family:'Liberation Sans', sans-serif;right:1608.00px;">26,584</div>
<div class="t" style="top:520.22px;font-size:17.6px;line-height:17.6px;color:#111;font-weight:normal;font-family:'Liberation Sans', sans-serif;right:1519.00px;">55</div>
<div class="t" style="top:520.22px;font-size:17.6px;line-height:17.6px;color:#111;font-weight:normal;font-family:'Liberation Sans', sans-serif;right:1429.00px;">1,220</div>
<div class="t" style="top:520.31px;font-size:17.5px;line-height:17.5px;color:#111;font-weight:normal;font-family:'Liberation Sans', sans-serif;left:584.00px;letter-spacing:-0.3px;">This product is okay, but I expected more features for the price.</div>
<div class="t" style="top:520.31px;font-size:17.5px;line-height:17.5px;color:#111;font-weight:normal;font-family:'Liberation Sans', sans-serif;left:1106.00px;letter-spacing:-0.3px;">South</div>
<div class="t" style="top:568.74px;font-size:17.6px;line-height:17.6px;color:#111;font-weight:normal;font-family:'Liberation Sans', sans-serif;right:1882.50px;">45</div>
<div class="t" style="top:568.83px;font-size:17.5px;line-height:17.5px;color:#111;font-weight:normal;font-family:'Liberation Sans', sans-serif;left:126.00px;letter-spacing:-0.3px;">P045</div>
<div class="t" style="top:568.83px;font-size:17.5px;line-height:17.5px;color:#111;font-weight:normal;font-family:'Liberation Sans', sans-serif;left:173.00px;letter-spacing:-0.3px;">Standard Charger</div>
<div class="t" style="top:568.74px;font-size:17.6px;line-height:17.6px;color:#111;font-weight:normal;font-family:'Liberation Sans', sans-serif;right:1608.00px;">17,399</div>
<div class="t" style="top:568.74px;font-size:17.6px;line-height:17.6px;color:#111;font-weight:normal;font-family:'Liberation Sans', sans-serif;right:1519.00px;">80</div>
<div class="t" style="top:568.74px;font-size:17.6px;line-height:17.6px;color:#111;font-weight:normal;font-family:'Liberation Sans', sans-serif;right:1429.00px;">2,171</div>
<div class="t" style="top:568.83px;font-size:17.5px;line-height:17.5px;color:#111;font-weight:normal;font-family:'Liberation Sans', sans-serif;left:584.00px;letter-spacing:-0.3px;">Wouldn't recommend, too many issues with connectivity.</div>
<div class="t" style="top:568.83px;font-size:17.5px;line-height:17.5px;color:#111;font-weight:normal;font-family:'Liberation Sans', sans-serif;left:1106.00px;letter-spacing:-0.3px;">West</div>
<div class="t" style="top:593.00px;font-size:17.6px;line-height:17.6px;color:#111;font-weight:normal;font-family:'Liberation Sans', sans-serif;right:1882.50px;">46</div>
<div class="t" style="top:593.09px;font-size:17.5px;line-height:17.5px;color:#111;font-weight:normal;font-family:'Liberation Sans', sans-serif;left:126.00px;letter-spacing:-0.3px;">P047</div>
<div class="t" style="top:593.09px;font-size:17.5px;line-height:17.5px;color:#111;font-weight:normal;font-family:'Liberation Sans', sans-serif;left:173.00px;letter-spacing:-0.3px;">Fast Charger</div>
<div class="t" style="top:593.00px;font-size:17.6px;line-height:17.6px;color:#111;font-weight:normal;font-family:'Liberation Sans', sans-serif;right:1608.00px;">17,460</div>
<div class="t" style="top:593.00px;font-size:17.6px;line-height:17.6px;color:#111;font-weight:normal;font-family:'Liberation Sans', sans-serif;right:1519.00px;">85</div>
<div class="t" style="top:593.00px;font-size:17.6px;line-height:17.6px;color:#111;font-weight:normal;font-family:'Liberation Sans', sans-serif;right:1429.00px;">2,233</div>
<div class="t" style="top:593.09px;font-size:17.5px;line-height:17.5px;color:#111;font-weight:normal;font-family:'Liberation Sans', sans-serif;left:584.00px;letter-spacing:-0.3px;">Satisfied with the performance, but it's a bit bulky.</div>
<div class="t" style="top:593.09px;font-size:17.5px;line-height:17.5px;color:#111;font-weight:normal;font-family:'Liberation Sans', sans-serif;left:1106.00px;letter-spacing:-0.3px;">West</div>
<div class="t" style="top:617.26px;font-size:17.6px;line-height:17.6px;color:#111;font-weight:normal;font-family:'Liberation Sans', sans-serif;right:1882.50px;">47</div>
<div class="t" style="top:617.35px;font-size:17.5px;line-height:17.5px;color:#111;font-weight:normal;font-family:'Liberation Sans', sans-serif;left:126.00px;letter-spacing:-0.3px;">P037</div>
<div class="t" style="top:617.35px;font-size:17.5px;line-height:17.5px;color:#111;font-weight:normal;font-family:'Liberation Sans', sans-serif;left:173.00px;letter-spacing:-0.3px;">Fast Charger</div>
<div class="t" style="top:617.26px;font-size:17.6px;line-height:17.6px;color:#111;font-weight:normal;font-family:'Liberation Sans', sans-serif;right:1608.00px;">17,740</div>
<div class="t" style="top:617.26px;font-size:17.6px;line-height:17.6px;color:#111;font-weight:normal;font-family:'Liberation Sans', sans-serif;right:1519.00px;">93</div>
<div class="t" style="top:617.26px;font-size:17.6px;line-height:17.6px;color:#111;font-weight:normal;font-family:'Liberation Sans', sans-serif;right:1429.00px;">2,285</div>
<div class="t" style="top:617.35px;font-size:17.5px;line-height:17.5px;color:#111;font-weight:normal;font-family:'Liberation Sans', sans-serif;left:584.00px;letter-spacing:-0.3px;">Not happy with the purchase, returned it within a week.</div>
<div class="t" style="top:617.35px;font-size:17.5px;line-height:17.5px;color:#111;font-weight:normal;font-family:'Liberation Sans', sans-serif;left:1106.00px;letter-spacing:-0.3px;">East</div>
<div class="t" style="top:641.52px;font-size:17.6px;line-height:17.6px;color:#111;font-weight:normal;font-family:'Liberation Sans', sans-serif;right:1882.50px;">48</div>
<div class="t" style="top:641.61px;font-size:17.5px;line-height:17.5px;color:#111;font-weight:normal;font-family:'Liberation Sans', sans-serif;left:126.00px;letter-spacing:-0.3px;">P049</div>
<div class="t" style="top:641.61px;font-size:17.5px;line-height:17.5px;color:#111;font-weight:normal;font-family:'Liberation Sans', sans-serif;left:173.00px;letter-spacing:-0.3px;">Standard Charger</div>
<div class="t" style="top:641.52px;font-size:17.6px;line-height:17.6px;color:#111;font-weight:normal;font-family:'Liberation Sans', sans-serif;right:1608.00px;">20,257</div>
<div class="t" style="top:641.52px;font-size:17.6px;line-height:17.6px;color:#111;font-weight:normal;font-family:'Liberation Sans', sans-serif;right:1519.00px;">94</div>
<div class="t" style="top:641.52px;font-size:17.6px;line-height:17.6px;color:#111;font-weight:normal;font-family:'Liberation Sans', sans-serif;right:1429.00px;">2,469</div>
<div class="t" style="top:641.61px;font-size:17.5px;line-height:17.5px;color:#111;font-weight:normal;font-family:'Liberation Sans', sans-serif;left:584.00px;letter-spacing:-0.3px;">Simple to use, but the instructions could be clearer.</div>
<div class="t" style="top:641.61px;font-size:17.5px;line-height:17.5px;color:#111;font-weight:normal;font-family:'Liberation Sans', sans-serif;left:1106.00px;letter-spacing:-0.3px;">West</div>
<div class="t" style="top:665.78px;font-size:17.6px;line-height:17.6px;color:#111;font-weight:normal;font-family:'Liberation Sans', sans-serif;right:1882.50px;">49</div>
<div class="t" style="top:665.87px;font-size:17.5px;line-height:17.5px;color:#111;font-weight:normal;font-family:'Liberation Sans', sans-serif;left:126.00px;letter-spacing:-0.3px;">P010</div>
<div class="t" style="top:665.87px;font-size:17.5px;line-height:17.5px;color:#111;font-weight:normal;font-family:'Liberation Sans', sans-serif;left:173.00px;letter-spacing:-0.3px;">Fast Charger</div>
<div class="t" style="top:665.78px;font-size:17.6px;line-height:17.6px;color:#111;font-weight:normal;font-family:'Liberation Sans', sans-serif;right:1608.00px;">8,005</div>
<div class="t" style="top:665.78px;font-size:17.6px;line-height:17.6px;color:#111;font-weight:normal;font-family:'Liberation Sans', sans-serif;right:1519.00px;">56</div>
<div class="t" style="top:665.78px;font-size:17.6px;line-height:17.6px;color:#111;font-weight:normal;font-family:'Liberation Sans', sans-serif;right:1429.00px;">2,560</div>
<div class="t" style="top:665.87px;font-size:17.5px;line-height:17.5px;color:#111;font-weight:normal;font-family:'Liberation Sans', sans-serif;left:584.00px;letter-spacing:-0.3px;">Mediocre at best. There are better options available in the market.</div>
<div class="t" style="top:665.87px;font-size:17.5px;line-height:17.5px;color:#111;font-weight:normal;font-family:'Liberation Sans', sans-serif;left:1106.00px;letter-spacing:-0.3px;">West</div>
<div class="t" style="top:544.57px;font-size:17.5px;line-height:17.5px;color:#111;font-weight:normal;font-family:'Liberation Sans', sans-serif;left:41.00px;letter-spacing:-0.3px;">...</div>
<div class="t" style="top:544.57px;font-size:17.5px;line-height:17.5px;color:#111;font-weight:normal;font-family:'Liberation Sans', sans-serif;left:126.00px;letter-spacing:-0.3px;">...</div>
<div class="t" style="top:544.57px;font-size:17.5px;line-height:17.5px;color:#111;font-weight:normal;font-family:'Liberation Sans', sans-serif;left:173.00px;letter-spacing:-0.3px;">...</div>
<div class="t" style="top:544.57px;font-size:17.5px;line-height:17.5px;color:#111;font-weight:normal;font-family:'Liberation Sans', sans-serif;left:322.00px;letter-spacing:-0.3px;">...</div>
<div class="t" style="top:544.57px;font-size:17.5px;line-height:17.5px;color:#111;font-weight:normal;font-family:'Liberation Sans', sans-serif;left:411.00px;letter-spacing:-0.3px;">...</div>
<div class="t" style="top:544.57px;font-size:17.5px;line-height:17.5px;color:#111;font-weight:normal;font-family:'Liberation Sans', sans-serif;left:501.00px;letter-spacing:-0.3px;">...</div>
<div class="t" style="top:544.57px;font-size:17.5px;line-height:17.5px;color:#111;font-weight:normal;font-family:'Liberation Sans', sans-serif;left:584.00px;letter-spacing:-0.3px;">...</div>
<div class="t" style="top:544.57px;font-size:17.5px;line-height:17.5px;color:#111;font-weight:normal;font-family:'Liberation Sans', sans-serif;left:1106.00px;letter-spacing:-0.3px;">...</div>
<div class="r" style="left:36.00px;top:732.76px;width:86.50px;height:26.26px;border:2px solid #17663a;box-sizing:border-box;"></div>
<div class="r" style="left:118.00px;top:755.52px;width:6.00px;height:6.00px;background:#17663a;border:1px solid #fff;box-sizing:border-box;"></div>
<div class="r" style="left:1190.50px;top:200.00px;width:37.50px;height:871.50px;background:#f3f3f3;"></div>
<div class="r" style="left:1228.00px;top:190.00px;width:2.00px;height:935.00px;background:#dcdcdc;"></div>
<svg class="r" style="left:1204px;top:203px;" width="14" height="10" viewBox="0 0 14 10"><path d="M7 0 L14 10 H0 Z" fill="#6e6e6e" stroke="#6e6e6e" stroke-width="2" stroke-linejoin="round"/></svg>
<div class="r" style="left:1204.50px;top:223.00px;width:14.00px;height:668.00px;background:#707070;border-radius:7px;"></div>
<svg class="r" style="left:1204px;top:1053px;" width="14" height="10" viewBox="0 0 14 10"><path d="M0 0 H14 L7 10 Z" fill="#6e6e6e" stroke="#6e6e6e" stroke-width="2" stroke-linejoin="round"/></svg>
<div class="r" style="left:0.00px;top:1022.00px;width:1190.50px;height:8.00px;background:#f7f7f7;"></div>
<div class="r" style="left:0.00px;top:1030.00px;width:1190.50px;height:95.00px;background:#ebe9e9;"></div>
<div class="r" style="left:1190.50px;top:1071.50px;width:37.50px;height:53.50px;background:#ebe9e9;"></div>
<svg class="r" style="left:41px;top:1047px;" width="10" height="16" viewBox="0 0 10 16"><path d="M8 1 L1 8 L8 15" fill="none" stroke="#8a8a8a" stroke-width="1.7"/></svg>
<svg class="r" style="left:97px;top:1047px;" width="10" height="16" viewBox="0 0 10 16"><path d="M1 1 L8 8 L1 15" fill="none" stroke="#8a8a8a" stroke-width="1.7"/></svg>
<div class="t" style="top:1046.70px;font-size:22.8px;line-height:22.8px;color:#1b1b1b;font-weight:normal;font-family:'Liberation Sans', sans-serif;left:208.00px;">EV Charger Data</div>
<div class="r" style="left:406.50px;top:1040.00px;width:1.00px;height:32.00px;background:#d0d0d0;"></div>
<div class="r" style="left:414.00px;top:1030.00px;width:127.00px;height:47.00px;background:#f8f8f8;border-radius:0 0 8px 8px;"></div>
<div class="t" style="top:1042.70px;font-size:22.8px;line-height:22.8px;color:#111;font-weight:normal;font-family:'Liberation Sans', sans-serif;left:428.00px;">Analysis1</div>
<div class="r" style="left:428.00px;top:1069.00px;width:99.00px;height:4.00px;background:#137c44;border-radius:1px;"></div>
<div class="r" style="left:547.50px;top:1040.00px;width:1.00px;height:32.00px;background:#d0d0d0;"></div>
<svg class="r" style="left:621px;top:1045px;" width="20" height="20" viewBox="0 0 20 20"><path d="M10 0 V20 M0 10 H20" stroke="#333" stroke-width="2"/></svg>
<div class="r" style="left:149.00px;top:749.50px;width:988.50px;height:272.50px;background:#fff;border:2px solid #111;border-bottom:none;box-sizing:border-box;"></div>
<div class="t" style="top:753.76px;font-size:18px;line-height:18px;color:#111;font-weight:normal;font-family:'Liberation Sans', sans-serif;left:95.00px;width:1000px;text-align:center;-webkit-text-stroke:0.1px;">Pair Plot of Revenue, Marketing Spend, and Units Sold by Region</div>
<svg class="r" style="left:0;top:0" width="2000" height="1125"><defs><clipPath id="pc"><rect x="0" y="0" width="2000" height="1022"/></clipPath></defs><g clip-path="url(#pc)"><rect x="219.2" y="774.2" width="224.6" height="104.4" fill="#eaeaf2"/><line x1="262.6" y1="774.2" x2="262.6" y2="878.6" stroke="#fff" stroke-width="1.3"/><line x1="311.4" y1="774.2" x2="311.4" y2="878.6" stroke="#fff" stroke-width="1.3"/><line x1="360.6" y1="774.2" x2="360.6" y2="878.6" stroke="#fff" stroke-width="1.3"/><line x1="409.4" y1="774.2" x2="409.4" y2="878.6" stroke="#fff" stroke-width="1.3"/><line x1="219.2" y1="805.7" x2="443.8" y2="805.7" stroke="#fff" stroke-width="1.3"/><line x1="219.2" y1="844.9" x2="443.8" y2="844.9" stroke="#fff" stroke-width="1.3"/><rect x="219.2" y="885.4" width="224.6" height="104.0" fill="#eaeaf2"/><line x1="262.6" y1="885.4" x2="262.6" y2="989.4" stroke="#fff" stroke-width="1.3"/><line x1="311.4" y1="885.4" x2="311.4" y2="989.4" stroke="#fff" stroke-width="1.3"/><line x1="360.6" y1="885.4" x2="360.6" y2="989.4" stroke="#fff" stroke-width="1.3"/><line x1="409.4" y1="885.4" x2="409.4" y2="989.4" stroke="#fff" stroke-width="1.3"/><line x1="219.2" y1="895.6" x2="443.8" y2="895.6" stroke="#fff" stroke-width="1.3"/><line x1="219.2" y1="928.2" x2="443.8" y2="928.2" stroke="#fff" stroke-width="1.3"/><line x1="219.2" y1="964.7" x2="443.8" y2="964.7" stroke="#fff" stroke-width="1.3"/><rect x="219.2" y="996.8" width="224.6" height="104.2" fill="#eaeaf2"/><line x1="262.6" y1="996.8" x2="262.6" y2="1101" stroke="#fff" stroke-width="1.3"/><line x1="311.4" y1="996.8" x2="311.4" y2="1101" stroke="#fff" stroke-width="1.3"/><line x1="360.6" y1="996.8" x2="360.6" y2="1101" stroke="#fff" stroke-width="1.3"/><line x1="409.4" y1="996.8" x2="409.4" y2="1101" stroke="#fff" stroke-width="1.3"/><rect x="463" y="774.2" width="225.0" height="104.4" fill="#eaeaf2"/><line x1="512.4" y1="774.2" x2="512.4" y2="878.6" stroke="#fff" stroke-width="1.3"/><line x1="583.6" y1="774.2" x2="583.6" y2="878.6" stroke="#fff" stroke-width="1.3"/><line x1="652.6" y1="774.2" x2="652.6" y2="878.6" stroke="#fff" stroke-width="1.3"/><line x1="463" y1="805.7" x2="688" y2="805.7" stroke="#fff" stroke-width="1.3"/><line x1="463" y1="844.9" x2="688" y2="844.9" stroke="#fff" stroke-width="1.3"/><rect x="463" y="885.4" width="225.0" height="104.0" fill="#eaeaf2"/><line x1="512.4" y1="885.4" x2="512.4" y2="989.4" stroke="#fff" stroke-width="1.3"/><line x1="583.6" y1="885.4" x2="583.6" y2="989.4" stroke="#fff" stroke-width="1.3"/><line x1="652.6" y1="885.4" x2="652.6" y2="989.4" stroke="#fff" stroke-width="1.3"/><line x1="463" y1="895.6" x2="688" y2="895.6" stroke="#fff" stroke-width="1.3"/><line x1="463" y1="928.2" x2="688" y2="928.2" stroke="#fff" stroke-width="1.3"/><line x1="463" y1="964.7" x2="688" y2="964.7" stroke="#fff" stroke-width="1.3"/><rect x="463" y="996.8" width="225.0" height="104.2" fill="#eaeaf2"/><line x1="512.4" y1="996.8" x2="512.4" y2="1101" stroke="#fff" stroke-width="1.3"/><line x1="583.6" y1="996.8" x2="583.6" y2="1101" stroke="#fff" stroke-width="1.3"/><line x1="652.6" y1="996.8" x2="652.6" y2="1101" stroke="#fff" stroke-width="1.3"/><rect x="707" y="774.2" width="224.5" height="104.4" fill="#eaeaf2"/><line x1="734" y1="774.2" x2="734" y2="878.6" stroke="#fff" stroke-width="1.3"/><line x1="781" y1="774.2" x2="781" y2="878.6" stroke="#fff" stroke-width="1.3"/><line x1="824.8" y1="774.2" x2="824.8" y2="878.6" stroke="#fff" stroke-width="1.3"/><line x1="869.8" y1="774.2" x2="869.8" y2="878.6" stroke="#fff" stroke-width="1.3"/><line x1="914.8" y1="774.2" x2="914.8" y2="878.6" stroke="#fff" stroke-width="1.3"/><line x1="707" y1="805.7" x2="931.5" y2="805.7" stroke="#fff" stroke-width="1.3"/><line x1="707" y1="844.9" x2="931.5" y2="844.9" stroke="#fff" stroke-width="1.3"/><rect x="707" y="885.4" width="224.5" height="104.0" fill="#eaeaf2"/><line x1="734" y1="885.4" x2="734" y2="989.4" stroke="#fff" stroke-width="1.3"/><line x1="781" y1="885.4" x2="781" y2="989.4" stroke="#fff" stroke-width="1.3"/><line x1="824.8" y1="885.4" x2="824.8" y2="989.4" stroke="#fff" stroke-width="1.3"/><line x1="869.8" y1="885.4" x2="869.8" y2="989.4" stroke="#fff" stroke-width="1.3"/><line x1="914.8" y1="885.4" x2="914.8" y2="989.4" stroke="#fff" stroke-width="1.3"/><line x1="707" y1="895.6" x2="931.5" y2="895.6" stroke="#fff" stroke-width="1.3"/><line x1="707" y1="928.2" x2="931.5" y2="928.2" stroke="#fff" stroke-width="1.3"/><line x1="707" y1="964.7" x2="931.5" y2="964.7" stroke="#fff" stroke-width="1.3"/><rect x="707" y="996.8" width="224.5" height="104.2" fill="#eaeaf2"/><line x1="734" y1="996.8" x2="734" y2="1101" stroke="#fff" stroke-width="1.3"/><line x1="781" y1="996.8" x2="781" y2="1101" stroke="#fff" stroke-width="1.3"/><line x1="824.8" y1="996.8" x2="824.8" y2="1101" stroke="#fff" stroke-width="1.3"/><line x1="869.8" y1="996.8" x2="869.8" y2="1101" stroke="#fff" stroke-width="1.3"/><line x1="914.8" y1="996.8" x2="914.8" y2="1101" stroke="#fff" stroke-width="1.3"/><path d="M228.0,878.6 L228.0,878.0 L229.0,877.9 L230.0,877.8 L231.0,877.7 L232.0,877.7 L233.0,877.6 L234.0,877.4 L235.0,877.3 L236.0,877.2 L237.0,877.1 L238.0,876.9 L239.0,876.7 L240.0,876.6 L241.0,876.4 L242.0,876.1 L243.0,875.9 L244.0,875.7 L245.0,875.4 L246.0,875.1 L247.0,874.8 L248.0,874.5 L249.0,874.1 L250.0,873.7 L251.0,873.3 L252.0,872.9 L253.0,872.4 L254.0,871.9 L255.0,871.4 L256.0,870.8 L257.0,870.2 L258.0,869.6 L259.0,868.9 L260.0,868.2 L261.0,867.5 L262.0,866.7 L263.0,865.9 L264.0,865.0 L265.0,864.1 L266.0,863.1 L267.0,862.1 L268.0,861.1 L269.0,860.0 L270.0,858.9 L271.0,857.7 L272.0,856.4 L273.0,855.2 L274.0,853.8 L275.0,852.5 L276.0,851.0 L277.0,849.6 L278.0,848.1 L279.0,846.5 L280.0,844.9 L281.0,843.3 L282.0,841.7 L283.0,840.0 L284.0,838.2 L285.0,836.5 L286.0,834.7 L287.0,832.8 L288.0,831.0 L289.0,829.1 L290.0,827.3 L291.0,825.4 L292.0,823.5 L293.0,821.6 L294.0,819.7 L295.0,817.8 L296.0,815.9 L297.0,814.0 L298.0,812.2 L299.0,810.3 L300.0,808.5 L301.0,806.8 L302.0,805.0 L303.0,803.3 L304.0,801.7 L305.0,800.1 L306.0,798.5 L307.0,797.1 L308.0,795.6 L309.0,794.3 L310.0,793.0 L311.0,791.8 L312.0,790.7 L313.0,789.7 L314.0,788.7 L315.0,787.9 L316.0,787.1 L317.0,786.5 L318.0,785.9 L319.0,785.4 L320.0,785.1 L321.0,784.8 L322.0,784.6 L323.0,784.6 L324.0,784.6 L325.0,784.8 L326.0,785.2 L327.0,785.7 L328.0,786.3 L329.0,787.0 L330.0,787.9 L331.0,788.9 L332.0,790.0 L333.0,791.2 L334.0,792.5 L335.0,793.9 L336.0,795.4 L337.0,797.1 L338.0,798.7 L339.0,800.5 L340.0,802.4 L341.0,804.2 L342.0,806.2 L343.0,808.2 L344.0,810.2 L345.0,812.3 L346.0,814.3 L347.0,816.4 L348.0,818.5 L349.0,820.6 L350.0,822.7 L351.0,824.7 L352.0,826.8 L353.0,828.8 L354.0,830.8 L355.0,832.7 L356.0,834.6 L357.0,836.5 L358.0,838.3 L359.0,840.0 L360.0,841.7 L361.0,843.3 L362.0,844.8 L363.0,846.3 L364.0,847.7 L365.0,849.1 L366.0,850.4 L367.0,851.6 L368.0,852.7 L369.0,853.8 L370.0,854.8 L371.0,855.7 L372.0,856.6 L373.0,857.4 L374.0,858.2 L375.0,858.9 L376.0,859.6 L377.0,860.2 L378.0,860.7 L379.0,861.3 L380.0,861.7 L381.0,862.2 L382.0,862.6 L383.0,863.0 L384.0,863.4 L385.0,863.7 L386.0,864.0 L387.0,864.4 L388.0,864.7 L389.0,865.0 L390.0,865.3 L391.0,865.5 L392.0,865.8 L393.0,866.1 L394.0,866.4 L395.0,866.7 L396.0,867.0 L397.0,867.3 L398.0,867.6 L399.0,867.9 L400.0,868.2 L401.0,868.5 L402.0,868.8 L403.0,869.2 L404.0,869.5 L405.0,869.9 L406.0,870.2 L407.0,870.5 L408.0,870.9 L409.0,871.2 L410.0,871.6 L411.0,871.9 L412.0,872.3 L413.0,872.6 L414.0,872.9 L415.0,873.3 L416.0,873.6 L417.0,873.9 L418.0,874.2 L419.0,874.5 L420.0,874.8 L421.0,875.0 L422.0,875.3 L423.0,875.5 L424.0,875.8 L425.0,876.0 L426.0,876.2 L427.0,876.4 L428.0,876.6 L429.0,876.8 L430.0,876.9 L431.0,877.1 L432.0,877.2 L433.0,877.4 L434.0,877.5 L434.0,878.6 Z" fill="#377eb8" fill-opacity="0.28" stroke="#377eb8" stroke-opacity="0.8" stroke-width="1.3"/><path d="M250.0,878.6 L250.0,878.1 L251.0,878.1 L252.0,878.0 L253.0,877.9 L254.0,877.8 L255.0,877.6 L256.0,877.5 L257.0,877.3 L258.0,877.1 L259.0,876.9 L260.0,876.7 L261.0,876.4 L262.0,876.1 L263.0,875.7 L264.0,875.4 L265.0,874.9 L266.0,874.5 L267.0,873.9 L268.0,873.4 L269.0,872.7 L270.0,872.0 L271.0,871.3 L272.0,870.4 L273.0,869.5 L274.0,868.5 L275.0,867.5 L276.0,866.3 L277.0,865.1 L278.0,863.7 L279.0,862.3 L280.0,860.8 L281.0,859.1 L282.0,857.4 L283.0,855.6 L284.0,853.7 L285.0,851.6 L286.0,849.5 L287.0,847.3 L288.0,845.0 L289.0,842.6 L290.0,840.1 L291.0,837.5 L292.0,834.8 L293.0,832.1 L294.0,829.4 L295.0,826.6 L296.0,823.7 L297.0,820.8 L298.0,817.9 L299.0,815.1 L300.0,812.2 L301.0,809.3 L302.0,806.5 L303.0,803.8 L304.0,801.1 L305.0,798.5 L306.0,796.0 L307.0,793.7 L308.0,791.4 L309.0,789.3 L310.0,787.4 L311.0,785.6 L312.0,784.0 L313.0,782.6 L314.0,781.4 L315.0,780.4 L316.0,779.6 L317.0,779.1 L318.0,778.7 L319.0,778.6 L320.0,778.8 L321.0,779.4 L322.0,780.3 L323.0,781.7 L324.0,783.4 L325.0,785.4 L326.0,787.7 L327.0,790.3 L328.0,793.2 L329.0,796.3 L330.0,799.6 L331.0,803.1 L332.0,806.7 L333.0,810.4 L334.0,814.1 L335.0,817.9 L336.0,821.6 L337.0,825.4 L338.0,829.1 L339.0,832.7 L340.0,836.2 L341.0,839.5 L342.0,842.8 L343.0,845.9 L344.0,848.8 L345.0,851.5 L346.0,854.1 L347.0,856.5 L348.0,858.7 L349.0,860.7 L350.0,862.6 L351.0,864.2 L352.0,865.7 L353.0,867.1 L354.0,868.3 L355.0,869.3 L356.0,870.2 L357.0,871.0 L358.0,871.6 L359.0,872.2 L360.0,872.6 L361.0,872.9 L362.0,873.2 L363.0,873.3 L364.0,873.4 L365.0,873.4 L366.0,873.4 L367.0,873.3 L368.0,873.2 L369.0,873.0 L370.0,872.8 L371.0,872.5 L372.0,872.3 L373.0,872.0 L374.0,871.7 L375.0,871.3 L376.0,871.0 L377.0,870.7 L378.0,870.4 L379.0,870.0 L380.0,869.7 L381.0,869.4 L382.0,869.1 L383.0,868.9 L384.0,868.6 L385.0,868.4 L386.0,868.2 L387.0,868.0 L388.0,867.9 L389.0,867.7 L390.0,867.7 L391.0,867.6 L392.0,867.6 L393.0,867.6 L394.0,867.7 L395.0,867.8 L396.0,867.9 L397.0,868.0 L398.0,868.2 L399.0,868.4 L400.0,868.6 L401.0,868.9 L402.0,869.2 L403.0,869.5 L404.0,869.8 L405.0,870.1 L406.0,870.5 L407.0,870.8 L408.0,871.2 L409.0,871.6 L410.0,871.9 L411.0,872.3 L412.0,872.7 L413.0,873.0 L414.0,873.4 L415.0,873.7 L416.0,874.1 L417.0,874.4 L418.0,874.7 L419.0,875.0 L420.0,875.3 L421.0,875.6 L422.0,875.9 L423.0,876.1 L424.0,876.3 L425.0,876.6 L426.0,876.8 L427.0,876.9 L428.0,877.1 L429.0,877.3 L430.0,877.4 L431.0,877.5 L432.0,877.7 L433.0,877.8 L434.0,877.9 L434.0,878.6 Z" fill="#984ea3" fill-opacity="0.28" stroke="#984ea3" stroke-opacity="0.8" stroke-width="1.3"/><path d="M250.0,878.6 L250.0,878.4 L251.0,878.4 L252.0,878.4 L253.0,878.3 L254.0,878.3 L255.0,878.2 L256.0,878.2 L257.0,878.1 L258.0,878.0 L259.0,877.9 L260.0,877.8 L261.0,877.6 L262.0,877.5 L263.0,877.3 L264.0,877.1 L265.0,876.9 L266.0,876.6 L267.0,876.3 L268.0,876.0 L269.0,875.6 L270.0,875.2 L271.0,874.8 L272.0,874.3 L273.0,873.7 L274.0,873.1 L275.0,872.5 L276.0,871.7 L277.0,870.9 L278.0,870.1 L279.0,869.1 L280.0,868.1 L281.0,867.1 L282.0,865.9 L283.0,864.7 L284.0,863.3 L285.0,862.0 L286.0,860.5 L287.0,858.9 L288.0,857.3 L289.0,855.6 L290.0,853.9 L291.0,852.1 L292.0,850.2 L293.0,848.3 L294.0,846.4 L295.0,844.4 L296.0,842.4 L297.0,840.4 L298.0,838.4 L299.0,836.4 L300.0,834.4 L301.0,832.5 L302.0,830.6 L303.0,828.7 L304.0,827.0 L305.0,825.3 L306.0,823.7 L307.0,822.3 L308.0,820.9 L309.0,819.7 L310.0,818.7 L311.0,817.7 L312.0,817.0 L313.0,816.4 L314.0,815.9 L315.0,815.7 L316.0,815.6 L317.0,815.7 L318.0,815.8 L319.0,816.1 L320.0,816.5 L321.0,817.0 L322.0,817.5 L323.0,818.2 L324.0,819.0 L325.0,819.9 L326.0,820.8 L327.0,821.9 L328.0,823.0 L329.0,824.2 L330.0,825.5 L331.0,826.8 L332.0,828.2 L333.0,829.6 L334.0,831.0 L335.0,832.5 L336.0,834.1 L337.0,835.6 L338.0,837.2 L339.0,838.8 L340.0,840.4 L341.0,842.0 L342.0,843.6 L343.0,845.1 L344.0,846.7 L345.0,848.2 L346.0,849.8 L347.0,851.2 L348.0,852.7 L349.0,854.1 L350.0,855.5 L351.0,856.8 L352.0,858.1 L353.0,859.4 L354.0,860.6 L355.0,861.8 L356.0,862.9 L357.0,864.0 L358.0,865.0 L359.0,865.9 L360.0,866.9 L361.0,867.7 L362.0,868.6 L363.0,869.3 L364.0,870.1 L365.0,870.8 L366.0,871.4 L367.0,872.0 L368.0,872.6 L369.0,873.1 L370.0,873.6 L371.0,874.0 L372.0,874.5 L373.0,874.8 L374.0,875.2 L375.0,875.5 L376.0,875.8 L377.0,876.1 L378.0,876.4 L379.0,876.6 L380.0,876.8 L380.0,878.6 Z" fill="#4daf4a" fill-opacity="0.28" stroke="#4daf4a" stroke-opacity="0.8" stroke-width="1.3"/><path d="M240.0,878.6 L240.0,878.1 L241.0,878.0 L242.0,877.9 L243.0,877.8 L244.0,877.6 L245.0,877.5 L246.0,877.3 L247.0,877.0 L248.0,876.8 L249.0,876.5 L250.0,876.1 L251.0,875.8 L252.0,875.4 L253.0,874.9 L254.0,874.4 L255.0,873.9 L256.0,873.3 L257.0,872.6 L258.0,871.9 L259.0,871.2 L260.0,870.4 L261.0,869.6 L262.0,868.7 L263.0,867.8 L264.0,866.9 L265.0,866.0 L266.0,865.0 L267.0,864.0 L268.0,863.0 L269.0,862.1 L270.0,861.1 L271.0,860.2 L272.0,859.2 L273.0,858.4 L274.0,857.5 L275.0,856.8 L276.0,856.0 L277.0,855.4 L278.0,854.7 L279.0,854.2 L280.0,853.7 L281.0,853.2 L282.0,852.8 L283.0,852.4 L284.0,852.1 L285.0,851.7 L286.0,851.4 L287.0,851.0 L288.0,850.6 L289.0,850.1 L290.0,849.5 L291.0,848.7 L292.0,847.8 L293.0,846.7 L294.0,845.4 L295.0,843.9 L296.0,842.1 L297.0,840.1 L298.0,837.8 L299.0,835.2 L300.0,832.4 L301.0,829.4 L302.0,826.1 L303.0,822.7 L304.0,819.2 L305.0,815.6 L306.0,812.0 L307.0,808.4 L308.0,804.9 L309.0,801.5 L310.0,798.4 L311.0,795.6 L312.0,793.1 L313.0,791.0 L314.0,789.4 L315.0,788.3 L316.0,787.6 L317.0,787.5 L318.0,787.8 L319.0,788.4 L320.0,789.1 L321.0,790.1 L322.0,791.3 L323.0,792.6 L324.0,794.2 L325.0,796.0 L326.0,798.0 L327.0,800.1 L328.0,802.4 L329.0,804.8 L330.0,807.3 L331.0,809.9 L332.0,812.7 L333.0,815.4 L334.0,818.3 L335.0,821.1 L336.0,824.0 L337.0,826.9 L338.0,829.7 L339.0,832.6 L340.0,835.3 L341.0,838.1 L342.0,840.7 L343.0,843.3 L344.0,845.8 L345.0,848.2 L346.0,850.5 L347.0,852.7 L348.0,854.8 L349.0,856.8 L350.0,858.7 L351.0,860.4 L352.0,862.1 L353.0,863.6 L354.0,865.1 L355.0,866.4 L356.0,867.7 L357.0,868.8 L358.0,869.8 L359.0,870.8 L360.0,871.6 L361.0,872.4 L362.0,873.2 L363.0,873.8 L364.0,874.4 L365.0,874.9 L366.0,875.4 L367.0,875.8 L368.0,876.1 L369.0,876.5 L370.0,876.8 L371.0,877.0 L372.0,877.2 L373.0,877.4 L374.0,877.6 L375.0,877.7 L376.0,877.9 L377.0,878.0 L378.0,878.1 L379.0,878.2 L380.0,878.2 L381.0,878.3 L382.0,878.3 L383.0,878.4 L384.0,878.4 L385.0,878.5 L385.0,878.6 Z" fill="#e41a1c" fill-opacity="0.28" stroke="#e41a1c" stroke-opacity="0.8" stroke-width="1.3"/><path d="M473.0,989.2 L473.0,988.0 L474.0,987.8 L475.0,987.6 L476.0,987.4 L477.0,987.2 L478.0,986.9 L479.0,986.7 L480.0,986.3 L481.0,986.0 L482.0,985.6 L483.0,985.2 L484.0,984.7 L485.0,984.2 L486.0,983.7 L487.0,983.1 L488.0,982.4 L489.0,981.7 L490.0,981.0 L491.0,980.2 L492.0,979.3 L493.0,978.4 L494.0,977.4 L495.0,976.3 L496.0,975.2 L497.0,974.0 L498.0,972.7 L499.0,971.4 L500.0,970.0 L501.0,968.5 L502.0,967.0 L503.0,965.4 L504.0,963.8 L505.0,962.0 L506.0,960.3 L507.0,958.4 L508.0,956.6 L509.0,954.7 L510.0,952.7 L511.0,950.7 L512.0,948.7 L513.0,946.7 L514.0,944.6 L515.0,942.6 L516.0,940.6 L517.0,938.5 L518.0,936.5 L519.0,934.6 L520.0,932.7 L521.0,930.8 L522.0,929.0 L523.0,927.2 L524.0,925.6 L525.0,924.0 L526.0,922.5 L527.0,921.1 L528.0,919.8 L529.0,918.7 L530.0,917.6 L531.0,916.7 L532.0,915.9 L533.0,915.3 L534.0,914.8 L535.0,914.4 L536.0,914.2 L537.0,914.1 L538.0,914.3 L539.0,914.5 L540.0,915.0 L541.0,915.6 L542.0,916.3 L543.0,917.2 L544.0,918.3 L545.0,919.4 L546.0,920.7 L547.0,922.1 L548.0,923.6 L549.0,925.2 L550.0,926.8 L551.0,928.6 L552.0,930.3 L553.0,932.1 L554.0,933.9 L555.0,935.7 L556.0,937.5 L557.0,939.4 L558.0,941.1 L559.0,942.9 L560.0,944.6 L561.0,946.2 L562.0,947.8 L563.0,949.3 L564.0,950.8 L565.0,952.2 L566.0,953.5 L567.0,954.7 L568.0,955.8 L569.0,956.9 L570.0,957.8 L571.0,958.7 L572.0,959.5 L573.0,960.2 L574.0,960.8 L575.0,961.3 L576.0,961.8 L577.0,962.2 L578.0,962.5 L579.0,962.7 L580.0,962.9 L581.0,963.1 L582.0,963.1 L583.0,963.2 L584.0,963.2 L585.0,963.1 L586.0,963.1 L587.0,963.0 L588.0,962.9 L589.0,962.7 L590.0,962.6 L591.0,962.4 L592.0,962.3 L593.0,962.1 L594.0,961.9 L595.0,961.8 L596.0,961.6 L597.0,961.5 L598.0,961.4 L599.0,961.2 L600.0,961.1 L601.0,961.1 L602.0,961.0 L603.0,961.0 L604.0,961.0 L605.0,961.0 L606.0,961.1 L607.0,961.1 L608.0,961.2 L609.0,961.3 L610.0,961.5 L611.0,961.6 L612.0,961.8 L613.0,962.0 L614.0,962.2 L615.0,962.5 L616.0,962.8 L617.0,963.1 L618.0,963.4 L619.0,963.7 L620.0,964.1 L621.0,964.5 L622.0,964.9 L623.0,965.3 L624.0,965.7 L625.0,966.2 L626.0,966.6 L627.0,967.1 L628.0,967.6 L629.0,968.1 L630.0,968.6 L631.0,969.1 L632.0,969.6 L633.0,970.1 L634.0,970.6 L635.0,971.2 L636.0,971.7 L637.0,972.2 L638.0,972.7 L639.0,973.3 L640.0,973.8 L641.0,974.3 L642.0,974.8 L643.0,975.4 L644.0,975.9 L645.0,976.4 L646.0,976.9 L647.0,977.4 L648.0,977.8 L649.0,978.3 L650.0,978.8 L651.0,979.2 L652.0,979.7 L653.0,980.1 L654.0,980.5 L655.0,980.9 L656.0,981.3 L657.0,981.7 L658.0,982.1 L659.0,982.5 L660.0,982.8 L661.0,983.1 L662.0,983.5 L663.0,983.8 L664.0,984.1 L665.0,984.4 L666.0,984.6 L667.0,984.9 L668.0,985.2 L669.0,985.4 L670.0,985.6 L671.0,985.9 L672.0,986.1 L673.0,986.3 L674.0,986.5 L675.0,986.6 L676.0,986.8 L677.0,987.0 L678.0,987.1 L678.0,989.2 Z" fill="#377eb8" fill-opacity="0.28" stroke="#377eb8" stroke-opacity="0.8" stroke-width="1.3"/><path d="M490.0,989.2 L490.0,988.6 L491.0,988.4 L492.0,988.3 L493.0,988.1 L494.0,987.8 L495.0,987.5 L496.0,987.2 L497.0,986.8 L498.0,986.3 L499.0,985.8 L500.0,985.2 L501.0,984.5 L502.0,983.7 L503.0,982.8 L504.0,981.7 L505.0,980.6 L506.0,979.3 L507.0,977.8 L508.0,976.2 L509.0,974.5 L510.0,972.6 L511.0,970.5 L512.0,968.2 L513.0,965.8 L514.0,963.3 L515.0,960.5 L516.0,957.7 L517.0,954.6 L518.0,951.5 L519.0,948.3 L520.0,944.9 L521.0,941.6 L522.0,938.1 L523.0,934.7 L524.0,931.3 L525.0,928.0 L526.0,924.7 L527.0,921.5 L528.0,918.5 L529.0,915.7 L530.0,913.1 L531.0,910.7 L532.0,908.5 L533.0,906.6 L534.0,905.0 L535.0,903.7 L536.0,902.7 L537.0,902.0 L538.0,901.6 L539.0,901.5 L540.0,901.6 L541.0,902.1 L542.0,902.8 L543.0,903.7 L544.0,904.8 L545.0,906.1 L546.0,907.5 L547.0,909.1 L548.0,910.8 L549.0,912.6 L550.0,914.5 L551.0,916.5 L552.0,918.5 L553.0,920.5 L554.0,922.6 L555.0,924.7 L556.0,926.8 L557.0,929.0 L558.0,931.2 L559.0,933.4 L560.0,935.7 L561.0,937.9 L562.0,940.3 L563.0,942.6 L564.0,945.1 L565.0,947.7 L566.0,950.4 L567.0,953.1 L568.0,955.9 L569.0,958.7 L570.0,961.4 L571.0,964.1 L572.0,966.7 L573.0,969.2 L574.0,971.6 L575.0,973.8 L576.0,975.8 L577.0,977.7 L578.0,979.4 L579.0,980.9 L580.0,982.3 L581.0,983.5 L582.0,984.5 L583.0,985.4 L584.0,986.1 L585.0,986.7 L586.0,987.2 L587.0,987.6 L588.0,988.0 L589.0,988.3 L590.0,988.5 L590.0,989.2 Z" fill="#984ea3" fill-opacity="0.28" stroke="#984ea3" stroke-opacity="0.8" stroke-width="1.3"/><path d="M480.0,989.2 L480.0,988.9 L481.0,988.8 L482.0,988.8 L483.0,988.7 L484.0,988.6 L485.0,988.5 L486.0,988.4 L487.0,988.3 L488.0,988.2 L489.0,988.1 L490.0,987.9 L491.0,987.7 L492.0,987.5 L493.0,987.3 L494.0,987.1 L495.0,986.8 L496.0,986.5 L497.0,986.2 L498.0,985.8 L499.0,985.4 L500.0,985.0 L501.0,984.6 L502.0,984.1 L503.0,983.5 L504.0,982.9 L505.0,982.3 L506.0,981.7 L507.0,981.0 L508.0,980.2 L509.0,979.5 L510.0,978.6 L511.0,977.8 L512.0,976.9 L513.0,975.9 L514.0,974.9 L515.0,973.9 L516.0,972.9 L517.0,971.8 L518.0,970.7 L519.0,969.6 L520.0,968.4 L521.0,967.3 L522.0,966.1 L523.0,965.0 L524.0,963.8 L525.0,962.7 L526.0,961.6 L527.0,960.5 L528.0,959.4 L529.0,958.4 L530.0,957.4 L531.0,956.5 L532.0,955.6 L533.0,954.8 L534.0,954.1 L535.0,953.4 L536.0,952.8 L537.0,952.3 L538.0,951.9 L539.0,951.5 L540.0,951.3 L541.0,951.1 L542.0,951.1 L543.0,951.1 L544.0,951.1 L545.0,951.2 L546.0,951.4 L547.0,951.7 L548.0,951.9 L549.0,952.3 L550.0,952.7 L551.0,953.1 L552.0,953.6 L553.0,954.1 L554.0,954.6 L555.0,955.2 L556.0,955.8 L557.0,956.5 L558.0,957.1 L559.0,957.8 L560.0,958.5 L561.0,959.2 L562.0,960.0 L563.0,960.7 L564.0,961.4 L565.0,962.1 L566.0,962.9 L567.0,963.6 L568.0,964.3 L569.0,965.0 L570.0,965.7 L571.0,966.3 L572.0,967.0 L573.0,967.6 L574.0,968.2 L575.0,968.7 L576.0,969.3 L577.0,969.8 L578.0,970.3 L579.0,970.7 L580.0,971.2 L581.0,971.6 L582.0,972.0 L583.0,972.3 L584.0,972.7 L585.0,973.0 L586.0,973.3 L587.0,973.6 L588.0,973.9 L589.0,974.1 L590.0,974.4 L591.0,974.6 L592.0,974.8 L593.0,975.1 L594.0,975.3 L595.0,975.5 L596.0,975.7 L597.0,975.9 L598.0,976.2 L599.0,976.4 L600.0,976.6 L601.0,976.9 L602.0,977.1 L603.0,977.3 L604.0,977.6 L605.0,977.8 L606.0,978.0 L607.0,978.3 L608.0,978.5 L609.0,978.8 L610.0,979.0 L611.0,979.3 L612.0,979.5 L613.0,979.8 L614.0,980.1 L615.0,980.3 L616.0,980.6 L617.0,980.8 L618.0,981.1 L619.0,981.4 L620.0,981.6 L621.0,981.9 L622.0,982.2 L623.0,982.5 L624.0,982.7 L625.0,983.0 L626.0,983.2 L627.0,983.5 L628.0,983.8 L629.0,984.0 L630.0,984.3 L631.0,984.5 L632.0,984.7 L633.0,985.0 L634.0,985.2 L635.0,985.4 L636.0,985.6 L637.0,985.8 L638.0,986.0 L639.0,986.2 L640.0,986.4 L641.0,986.6 L642.0,986.7 L643.0,986.9 L644.0,987.1 L645.0,987.2 L646.0,987.4 L647.0,987.5 L648.0,987.6 L649.0,987.7 L650.0,987.8 L650.0,989.2 Z" fill="#4daf4a" fill-opacity="0.28" stroke="#4daf4a" stroke-opacity="0.8" stroke-width="1.3"/><path d="M498.0,989.2 L498.0,989.0 L499.0,989.0 L500.0,988.9 L501.0,988.8 L502.0,988.7 L503.0,988.5 L504.0,988.3 L505.0,988.0 L506.0,987.6 L507.0,987.1 L508.0,986.5 L509.0,985.8 L510.0,984.9 L511.0,983.8 L512.0,982.5 L513.0,981.0 L514.0,979.2 L515.0,977.1 L516.0,974.7 L517.0,971.9 L518.0,968.8 L519.0,965.4 L520.0,961.5 L521.0,957.4 L522.0,952.9 L523.0,948.1 L524.0,943.0 L525.0,937.8 L526.0,932.4 L527.0,927.0 L528.0,921.7 L529.0,916.4 L530.0,911.5 L531.0,906.8 L532.0,902.6 L533.0,899.0 L534.0,895.9 L535.0,893.6 L536.0,891.9 L537.0,891.1 L538.0,891.1 L539.0,891.7 L540.0,893.0 L541.0,894.9 L542.0,897.4 L543.0,900.5 L544.0,904.0 L545.0,907.9 L546.0,912.2 L547.0,916.7 L548.0,921.4 L549.0,926.2 L550.0,931.0 L551.0,935.7 L552.0,940.4 L553.0,944.8 L554.0,949.1 L555.0,953.1 L556.0,956.8 L557.0,960.2 L558.0,963.3 L559.0,966.1 L560.0,968.6 L561.0,970.7 L562.0,972.5 L563.0,974.1 L564.0,975.4 L565.0,976.4 L566.0,977.2 L567.0,977.8 L568.0,978.2 L569.0,978.5 L570.0,978.6 L571.0,978.6 L572.0,978.5 L573.0,978.4 L574.0,978.1 L575.0,977.9 L576.0,977.5 L577.0,977.2 L578.0,976.9 L579.0,976.5 L580.0,976.2 L581.0,975.8 L582.0,975.5 L583.0,975.2 L584.0,975.0 L585.0,974.7 L586.0,974.5 L587.0,974.4 L588.0,974.3 L589.0,974.2 L590.0,974.2 L591.0,974.2 L592.0,974.4 L593.0,974.7 L594.0,975.0 L595.0,975.4 L596.0,976.0 L597.0,976.5 L598.0,977.2 L599.0,977.9 L600.0,978.6 L601.0,979.3 L602.0,980.1 L603.0,980.9 L604.0,981.6 L605.0,982.3 L606.0,983.0 L607.0,983.7 L608.0,984.3 L609.0,984.9 L610.0,985.5 L611.0,986.0 L612.0,986.4 L613.0,986.8 L614.0,987.2 L615.0,987.5 L616.0,987.8 L617.0,988.0 L618.0,988.2 L619.0,988.4 L620.0,988.5 L621.0,988.7 L622.0,988.8 L622.0,989.2 Z" fill="#e41a1c" fill-opacity="0.28" stroke="#e41a1c" stroke-opacity="0.8" stroke-width="1.3"/><path d="M730.0,1101 L730.0,1100.9 L731.0,1100.8 L732.0,1100.8 L733.0,1100.7 L734.0,1100.7 L735.0,1100.6 L736.0,1100.5 L737.0,1100.4 L738.0,1100.2 L739.0,1100.1 L740.0,1099.9 L741.0,1099.7 L742.0,1099.4 L743.0,1099.1 L744.0,1098.7 L745.0,1098.3 L746.0,1097.8 L747.0,1097.2 L748.0,1096.6 L749.0,1095.9 L750.0,1095.0 L751.0,1094.1 L752.0,1093.0 L753.0,1091.9 L754.0,1090.5 L755.0,1089.1 L756.0,1087.5 L757.0,1085.7 L758.0,1083.8 L759.0,1081.7 L760.0,1079.4 L761.0,1076.9 L762.0,1074.3 L763.0,1071.5 L764.0,1068.5 L765.0,1065.4 L766.0,1062.1 L767.0,1058.7 L768.0,1055.2 L769.0,1051.6 L770.0,1047.9 L771.0,1044.1 L772.0,1040.3 L773.0,1036.6 L774.0,1032.8 L775.0,1029.1 L776.0,1025.5 L777.0,1022.0 L778.0,1018.7 L779.0,1015.6 L780.0,1012.8 L781.0,1010.1 L782.0,1007.8 L783.0,1005.8 L784.0,1004.1 L785.0,1002.7 L786.0,1001.8 L787.0,1001.2 L788.0,1001.0 L789.0,1001.1 L790.0,1001.6 L791.0,1002.2 L792.0,1003.2 L793.0,1004.4 L794.0,1005.9 L795.0,1007.6 L796.0,1009.5 L797.0,1011.6 L798.0,1013.9 L799.0,1016.4 L800.0,1019.1 L801.0,1021.9 L802.0,1024.8 L803.0,1027.8 L804.0,1030.9 L805.0,1034.0 L806.0,1037.2 L807.0,1040.3 L808.0,1043.5 L809.0,1046.7 L810.0,1049.8 L811.0,1052.9 L812.0,1056.0 L813.0,1058.9 L814.0,1061.8 L815.0,1064.6 L816.0,1067.2 L817.0,1069.8 L818.0,1072.3 L819.0,1074.6 L820.0,1076.8 L821.0,1078.9 L822.0,1080.8 L823.0,1082.7 L824.0,1084.4 L825.0,1086.0 L826.0,1087.5 L827.0,1088.8 L828.0,1090.1 L829.0,1091.3 L830.0,1092.3 L831.0,1093.3 L832.0,1094.2 L833.0,1094.9 L834.0,1095.7 L835.0,1096.3 L836.0,1096.9 L837.0,1097.4 L838.0,1097.9 L839.0,1098.3 L840.0,1098.6 L841.0,1099.0 L842.0,1099.2 L843.0,1099.5 L844.0,1099.7 L845.0,1099.9 L846.0,1100.1 L847.0,1100.2 L848.0,1100.3 L849.0,1100.4 L850.0,1100.5 L850.0,1101 Z" fill="#377eb8" fill-opacity="0.28" stroke="#377eb8" stroke-opacity="0.8" stroke-width="1.3"/><path d="M735.0,1101 L735.0,1100.8 L736.0,1100.8 L737.0,1100.7 L738.0,1100.6 L739.0,1100.5 L740.0,1100.4 L741.0,1100.3 L742.0,1100.1 L743.0,1099.9 L744.0,1099.7 L745.0,1099.4 L746.0,1099.0 L747.0,1098.6 L748.0,1098.2 L749.0,1097.6 L750.0,1097.0 L751.0,1096.3 L752.0,1095.4 L753.0,1094.5 L754.0,1093.4 L755.0,1092.2 L756.0,1090.8 L757.0,1089.3 L758.0,1087.6 L759.0,1085.7 L760.0,1083.7 L761.0,1081.4 L762.0,1079.0 L763.0,1076.3 L764.0,1073.5 L765.0,1070.4 L766.0,1067.2 L767.0,1063.8 L768.0,1060.3 L769.0,1056.6 L770.0,1052.8 L771.0,1048.9 L772.0,1045.0 L773.0,1041.0 L774.0,1037.0 L775.0,1033.0 L776.0,1029.1 L777.0,1025.3 L778.0,1021.7 L779.0,1018.3 L780.0,1015.1 L781.0,1012.2 L782.0,1009.6 L783.0,1007.4 L784.0,1005.5 L785.0,1004.0 L786.0,1002.9 L787.0,1002.2 L788.0,1002.0 L789.0,1002.2 L790.0,1002.7 L791.0,1003.5 L792.0,1004.7 L793.0,1006.2 L794.0,1008.0 L795.0,1010.0 L796.0,1012.4 L797.0,1014.9 L798.0,1017.7 L799.0,1020.7 L800.0,1023.8 L801.0,1027.1 L802.0,1030.5 L803.0,1033.9 L804.0,1037.4 L805.0,1041.0 L806.0,1044.5 L807.0,1048.0 L808.0,1051.4 L809.0,1054.8 L810.0,1058.1 L811.0,1061.4 L812.0,1064.5 L813.0,1067.4 L814.0,1070.3 L815.0,1073.0 L816.0,1075.5 L817.0,1077.9 L818.0,1080.1 L819.0,1082.2 L820.0,1084.2 L821.0,1086.0 L822.0,1087.6 L823.0,1089.1 L824.0,1090.5 L825.0,1091.7 L826.0,1092.9 L827.0,1093.9 L828.0,1094.8 L829.0,1095.6 L830.0,1096.3 L831.0,1097.0 L832.0,1097.5 L833.0,1098.0 L834.0,1098.5 L835.0,1098.8 L836.0,1099.2 L837.0,1099.4 L838.0,1099.7 L839.0,1099.9 L840.0,1100.1 L841.0,1100.2 L842.0,1100.4 L843.0,1100.5 L844.0,1100.6 L845.0,1100.6 L845.0,1101 Z" fill="#984ea3" fill-opacity="0.28" stroke="#984ea3" stroke-opacity="0.8" stroke-width="1.3"/><path d="M745.0,1101 L745.0,1100.9 L746.0,1100.9 L747.0,1100.8 L748.0,1100.8 L749.0,1100.7 L750.0,1100.5 L751.0,1100.4 L752.0,1100.2 L753.0,1099.9 L754.0,1099.6 L755.0,1099.2 L756.0,1098.7 L757.0,1098.0 L758.0,1097.2 L759.0,1096.3 L760.0,1095.1 L761.0,1093.7 L762.0,1092.1 L763.0,1090.2 L764.0,1088.0 L765.0,1085.5 L766.0,1082.6 L767.0,1079.4 L768.0,1075.8 L769.0,1071.9 L770.0,1067.7 L771.0,1063.1 L772.0,1058.3 L773.0,1053.2 L774.0,1048.1 L775.0,1042.8 L776.0,1037.5 L777.0,1032.3 L778.0,1027.3 L779.0,1022.6 L780.0,1018.3 L781.0,1014.4 L782.0,1011.1 L783.0,1008.5 L784.0,1006.6 L785.0,1005.4 L786.0,1005.0 L787.0,1005.3 L788.0,1006.3 L789.0,1008.0 L790.0,1010.2 L791.0,1013.0 L792.0,1016.3 L793.0,1020.0 L794.0,1024.1 L795.0,1028.5 L796.0,1033.2 L797.0,1037.9 L798.0,1042.8 L799.0,1047.6 L800.0,1052.4 L801.0,1057.0 L802.0,1061.5 L803.0,1065.8 L804.0,1069.8 L805.0,1073.6 L806.0,1077.1 L807.0,1080.2 L808.0,1083.1 L809.0,1085.7 L810.0,1088.0 L811.0,1090.0 L812.0,1091.8 L813.0,1093.4 L814.0,1094.7 L815.0,1095.8 L816.0,1096.8 L817.0,1097.6 L818.0,1098.3 L819.0,1098.8 L820.0,1099.3 L821.0,1099.6 L822.0,1099.9 L823.0,1100.2 L824.0,1100.4 L825.0,1100.5 L826.0,1100.6 L827.0,1100.7 L828.0,1100.8 L829.0,1100.8 L830.0,1100.9 L830.0,1101 Z" fill="#e41a1c" fill-opacity="0.28" stroke="#e41a1c" stroke-opacity="0.8" stroke-width="1.3"/><circle cx="527.8" cy="778.4" r="2.6" fill="#6e2f88" stroke="#fff" stroke-width="0.8"/><circle cx="529.2" cy="782" r="2.6" fill="#1c5aa0" stroke="#fff" stroke-width="0.8"/><circle cx="615.6" cy="803.6" r="2.6" fill="#1c5aa0" stroke="#fff" stroke-width="0.8"/><circle cx="590.8" cy="814.4" r="2.6" fill="#c8121a" stroke="#fff" stroke-width="0.8"/><circle cx="589" cy="817" r="2.6" fill="#2a9430" stroke="#fff" stroke-width="0.8"/><circle cx="592.6" cy="815.6" r="2.6" fill="#1c5aa0" stroke="#fff" stroke-width="0.8"/><circle cx="595.6" cy="815" r="2.6" fill="#1c5aa0" stroke="#fff" stroke-width="0.8"/><circle cx="599.2" cy="815" r="2.6" fill="#1c5aa0" stroke="#fff" stroke-width="0.8"/><circle cx="602.8" cy="813.6" r="2.6" fill="#2a9430" stroke="#fff" stroke-width="0.8"/><circle cx="565.6" cy="824.6" r="2.6" fill="#6e2f88" stroke="#fff" stroke-width="0.8"/><circle cx="568.6" cy="827.6" r="2.6" fill="#6e2f88" stroke="#fff" stroke-width="0.8"/><circle cx="575.2" cy="827" r="2.6" fill="#c8121a" stroke="#fff" stroke-width="0.8"/><circle cx="561.4" cy="828.6" r="2.6" fill="#1c5aa0" stroke="#fff" stroke-width="0.8"/><circle cx="552.4" cy="835.4" r="2.6" fill="#c8121a" stroke="#fff" stroke-width="0.8"/><circle cx="544" cy="835.8" r="2.6" fill="#1c5aa0" stroke="#fff" stroke-width="0.8"/><circle cx="536.2" cy="837.8" r="2.6" fill="#1c5aa0" stroke="#fff" stroke-width="0.8"/><circle cx="538.6" cy="838.4" r="2.6" fill="#2a9430" stroke="#fff" stroke-width="0.8"/><circle cx="543.4" cy="839.6" r="2.6" fill="#6e2f88" stroke="#fff" stroke-width="0.8"/><circle cx="532" cy="840.8" r="2.6" fill="#c8121a" stroke="#fff" stroke-width="0.8"/><circle cx="526.6" cy="844.4" r="2.6" fill="#6e2f88" stroke="#fff" stroke-width="0.8"/><circle cx="530.2" cy="844.4" r="2.6" fill="#1c5aa0" stroke="#fff" stroke-width="0.8"/><circle cx="534.4" cy="846.2" r="2.6" fill="#c8121a" stroke="#fff" stroke-width="0.8"/><circle cx="539.8" cy="842.6" r="2.6" fill="#6e2f88" stroke="#fff" stroke-width="0.8"/><circle cx="544.6" cy="843.8" r="2.6" fill="#6e2f88" stroke="#fff" stroke-width="0.8"/><circle cx="526" cy="852.2" r="2.6" fill="#2a9430" stroke="#fff" stroke-width="0.8"/><circle cx="538" cy="852.8" r="2.6" fill="#c8121a" stroke="#fff" stroke-width="0.8"/><circle cx="544.6" cy="852.2" r="2.6" fill="#2a9430" stroke="#fff" stroke-width="0.8"/><circle cx="622" cy="852.2" r="2.6" fill="#1c5aa0" stroke="#fff" stroke-width="0.8"/><circle cx="533.2" cy="863.8" r="2.6" fill="#1c5aa0" stroke="#fff" stroke-width="0.8"/><circle cx="535.6" cy="863.8" r="2.6" fill="#1c5aa0" stroke="#fff" stroke-width="0.8"/><circle cx="531.4" cy="869.4" r="2.6" fill="#c8121a" stroke="#fff" stroke-width="0.8"/><circle cx="529.4" cy="874.2" r="2.6" fill="#1c5aa0" stroke="#fff" stroke-width="0.8"/><circle cx="535.4" cy="874.2" r="2.6" fill="#c8121a" stroke="#fff" stroke-width="0.8"/><circle cx="788.2" cy="778.4" r="2.6" fill="#6e2f88" stroke="#fff" stroke-width="0.8"/><circle cx="785.8" cy="782.2" r="2.6" fill="#1c5aa0" stroke="#fff" stroke-width="0.8"/><circle cx="858.6" cy="803.6" r="2.6" fill="#1c5aa0" stroke="#fff" stroke-width="0.8"/><circle cx="833" cy="815" r="2.6" fill="#1c5aa0" stroke="#fff" stroke-width="0.8"/><circle cx="835.6" cy="815" r="2.6" fill="#c8121a" stroke="#fff" stroke-width="0.8"/><circle cx="842.2" cy="814.6" r="2.6" fill="#1c5aa0" stroke="#fff" stroke-width="0.8"/><circle cx="844.6" cy="816.2" r="2.6" fill="#1c5aa0" stroke="#fff" stroke-width="0.8"/><circle cx="856.6" cy="813.4" r="2.6" fill="#2a9430" stroke="#fff" stroke-width="0.8"/><circle cx="859" cy="817.2" r="2.6" fill="#2a9430" stroke="#fff" stroke-width="0.8"/><circle cx="805.6" cy="825" r="2.6" fill="#6e2f88" stroke="#fff" stroke-width="0.8"/><circle cx="803.8" cy="827.6" r="2.6" fill="#6e2f88" stroke="#fff" stroke-width="0.8"/><circle cx="811.4" cy="825.2" r="2.6" fill="#6e2f88" stroke="#fff" stroke-width="0.8"/><circle cx="818.6" cy="827.2" r="2.6" fill="#c8121a" stroke="#fff" stroke-width="0.8"/><circle cx="821" cy="825.4" r="2.6" fill="#1c5aa0" stroke="#fff" stroke-width="0.8"/><circle cx="829.4" cy="828.6" r="2.6" fill="#1c5aa0" stroke="#fff" stroke-width="0.8"/><circle cx="795.2" cy="835.2" r="2.6" fill="#c8121a" stroke="#fff" stroke-width="0.8"/><circle cx="794" cy="839.2" r="2.6" fill="#c8121a" stroke="#fff" stroke-width="0.8"/><circle cx="796.6" cy="840.8" r="2.6" fill="#c8121a" stroke="#fff" stroke-width="0.8"/><circle cx="802" cy="836.6" r="2.6" fill="#6e2f88" stroke="#fff" stroke-width="0.8"/><circle cx="807.8" cy="835.8" r="2.6" fill="#2a9430" stroke="#fff" stroke-width="0.8"/><circle cx="784" cy="836.2" r="2.6" fill="#1c5aa0" stroke="#fff" stroke-width="0.8"/><circle cx="785.8" cy="840.2" r="2.6" fill="#2a9430" stroke="#fff" stroke-width="0.8"/><circle cx="789.2" cy="839.4" r="2.6" fill="#2a9430" stroke="#fff" stroke-width="0.8"/><circle cx="776.8" cy="837.8" r="2.6" fill="#6e2f88" stroke="#fff" stroke-width="0.8"/><circle cx="778.6" cy="843.2" r="2.6" fill="#6e2f88" stroke="#fff" stroke-width="0.8"/><circle cx="780.4" cy="845" r="2.6" fill="#6e2f88" stroke="#fff" stroke-width="0.8"/><circle cx="797" cy="842.6" r="2.6" fill="#6e2f88" stroke="#fff" stroke-width="0.8"/><circle cx="771.4" cy="839.4" r="2.6" fill="#6e2f88" stroke="#fff" stroke-width="0.8"/><circle cx="767.6" cy="843" r="2.6" fill="#1c5aa0" stroke="#fff" stroke-width="0.8"/><circle cx="764" cy="846.2" r="2.6" fill="#c8121a" stroke="#fff" stroke-width="0.8"/><circle cx="791.4" cy="844.6" r="2.6" fill="#1c5aa0" stroke="#fff" stroke-width="0.8"/><circle cx="778.6" cy="852.2" r="2.6" fill="#2a9430" stroke="#fff" stroke-width="0.8"/><circle cx="789.4" cy="852.2" r="2.6" fill="#1c5aa0" stroke="#fff" stroke-width="0.8"/><circle cx="776.8" cy="863.8" r="2.6" fill="#1c5aa0" stroke="#fff" stroke-width="0.8"/><circle cx="780.8" cy="863.8" r="2.6" fill="#1c5aa0" stroke="#fff" stroke-width="0.8"/><circle cx="785.8" cy="869.4" r="2.6" fill="#c8121a" stroke="#fff" stroke-width="0.8"/><circle cx="787.6" cy="874.2" r="2.6" fill="#c8121a" stroke="#fff" stroke-width="0.8"/><circle cx="793" cy="873.8" r="2.6" fill="#1c5aa0" stroke="#fff" stroke-width="0.8"/><circle cx="301.8" cy="890.2" r="2.6" fill="#1c5aa0" stroke="#fff" stroke-width="0.8"/><circle cx="361" cy="896.2" r="2.6" fill="#1c5aa0" stroke="#fff" stroke-width="0.8"/><circle cx="349" cy="908.8" r="2.6" fill="#2a9430" stroke="#fff" stroke-width="0.8"/><circle cx="347.8" cy="913" r="2.6" fill="#1c5aa0" stroke="#fff" stroke-width="0.8"/><circle cx="346.8" cy="917.2" r="2.6" fill="#1c5aa0" stroke="#fff" stroke-width="0.8"/><circle cx="345.4" cy="919.8" r="2.6" fill="#1c5aa0" stroke="#fff" stroke-width="0.8"/><circle cx="348" cy="921.4" r="2.6" fill="#c8121a" stroke="#fff" stroke-width="0.8"/><circle cx="344.4" cy="923.2" r="2.6" fill="#2a9430" stroke="#fff" stroke-width="0.8"/><circle cx="332.4" cy="936.4" r="2.6" fill="#c8121a" stroke="#fff" stroke-width="0.8"/><circle cx="334.8" cy="937.6" r="2.6" fill="#1c5aa0" stroke="#fff" stroke-width="0.8"/><circle cx="331.8" cy="943" r="2.6" fill="#6e2f88" stroke="#fff" stroke-width="0.8"/><circle cx="335.2" cy="945.8" r="2.6" fill="#6e2f88" stroke="#fff" stroke-width="0.8"/><circle cx="330.6" cy="950.2" r="2.6" fill="#1c5aa0" stroke="#fff" stroke-width="0.8"/><circle cx="322.6" cy="959.2" r="2.6" fill="#c8121a" stroke="#fff" stroke-width="0.8"/><circle cx="319.8" cy="960.6" r="2.6" fill="#6e2f88" stroke="#fff" stroke-width="0.8"/><circle cx="302.2" cy="967.2" r="2.6" fill="#2a9430" stroke="#fff" stroke-width="0.8"/><circle cx="312" cy="966.6" r="2.6" fill="#6e2f88" stroke="#fff" stroke-width="0.8"/><circle cx="317.4" cy="968.2" r="2.6" fill="#6e2f88" stroke="#fff" stroke-width="0.8"/><circle cx="321.8" cy="967.6" r="2.6" fill="#1c5aa0" stroke="#fff" stroke-width="0.8"/><circle cx="313.8" cy="971.8" r="2.6" fill="#6e2f88" stroke="#fff" stroke-width="0.8"/><circle cx="300.6" cy="973.6" r="2.6" fill="#c8121a" stroke="#fff" stroke-width="0.8"/><circle cx="321" cy="972.2" r="2.6" fill="#1c5aa0" stroke="#fff" stroke-width="0.8"/><circle cx="275.4" cy="976.2" r="2.6" fill="#c8121a" stroke="#fff" stroke-width="0.8"/><circle cx="287.8" cy="976" r="2.6" fill="#1c5aa0" stroke="#fff" stroke-width="0.8"/><circle cx="288" cy="978.4" r="2.6" fill="#1c5aa0" stroke="#fff" stroke-width="0.8"/><circle cx="280.8" cy="980.6" r="2.6" fill="#c8121a" stroke="#fff" stroke-width="0.8"/><circle cx="275.4" cy="982.2" r="2.6" fill="#1c5aa0" stroke="#fff" stroke-width="0.8"/><circle cx="309.4" cy="977.4" r="2.6" fill="#c8121a" stroke="#fff" stroke-width="0.8"/><circle cx="315.4" cy="979.4" r="2.6" fill="#c8121a" stroke="#fff" stroke-width="0.8"/><circle cx="316.8" cy="974.8" r="2.6" fill="#2a9430" stroke="#fff" stroke-width="0.8"/><circle cx="319" cy="976" r="2.6" fill="#1c5aa0" stroke="#fff" stroke-width="0.8"/><circle cx="311.8" cy="981.8" r="2.6" fill="#1c5aa0" stroke="#fff" stroke-width="0.8"/><circle cx="310.8" cy="985" r="2.6" fill="#6e2f88" stroke="#fff" stroke-width="0.8"/><circle cx="302.2" cy="985.6" r="2.6" fill="#2a9430" stroke="#fff" stroke-width="0.8"/><circle cx="387" cy="982.6" r="2.6" fill="#1c5aa0" stroke="#fff" stroke-width="0.8"/><circle cx="391.8" cy="983.4" r="2.6" fill="#6e2f88" stroke="#fff" stroke-width="0.8"/><circle cx="789.4" cy="889.8" r="2.6" fill="#1c5aa0" stroke="#fff" stroke-width="0.8"/><circle cx="858.6" cy="896.2" r="2.6" fill="#1c5aa0" stroke="#fff" stroke-width="0.8"/><circle cx="856.6" cy="909.2" r="2.6" fill="#2a9430" stroke="#fff" stroke-width="0.8"/><circle cx="842.2" cy="912.6" r="2.6" fill="#1c5aa0" stroke="#fff" stroke-width="0.8"/><circle cx="833" cy="917" r="2.6" fill="#1c5aa0" stroke="#fff" stroke-width="0.8"/><circle cx="835" cy="920.8" r="2.6" fill="#c8121a" stroke="#fff" stroke-width="0.8"/><circle cx="844" cy="919.4" r="2.6" fill="#1c5aa0" stroke="#fff" stroke-width="0.8"/><circle cx="858.6" cy="922.6" r="2.6" fill="#2a9430" stroke="#fff" stroke-width="0.8"/><circle cx="818.6" cy="936.4" r="2.6" fill="#c8121a" stroke="#fff" stroke-width="0.8"/><circle cx="820.6" cy="937.6" r="2.6" fill="#1c5aa0" stroke="#fff" stroke-width="0.8"/><circle cx="803.8" cy="943" r="2.6" fill="#6e2f88" stroke="#fff" stroke-width="0.8"/><circle cx="805.8" cy="945.8" r="2.6" fill="#6e2f88" stroke="#fff" stroke-width="0.8"/><circle cx="811.4" cy="946.6" r="2.6" fill="#6e2f88" stroke="#fff" stroke-width="0.8"/><circle cx="829.4" cy="950.2" r="2.6" fill="#1c5aa0" stroke="#fff" stroke-width="0.8"/><circle cx="794.8" cy="959.2" r="2.6" fill="#c8121a" stroke="#fff" stroke-width="0.8"/><circle cx="802" cy="960.4" r="2.6" fill="#6e2f88" stroke="#fff" stroke-width="0.8"/><circle cx="807.8" cy="960.6" r="2.6" fill="#2a9430" stroke="#fff" stroke-width="0.8"/><circle cx="771.4" cy="967.8" r="2.6" fill="#6e2f88" stroke="#fff" stroke-width="0.8"/><circle cx="778.6" cy="967" r="2.6" fill="#6e2f88" stroke="#fff" stroke-width="0.8"/><circle cx="776.8" cy="969.4" r="2.6" fill="#6e2f88" stroke="#fff" stroke-width="0.8"/><circle cx="784" cy="969.4" r="2.6" fill="#1c5aa0" stroke="#fff" stroke-width="0.8"/><circle cx="789.4" cy="969" r="2.6" fill="#2a9430" stroke="#fff" stroke-width="0.8"/><circle cx="793.4" cy="969.4" r="2.6" fill="#c8121a" stroke="#fff" stroke-width="0.8"/><circle cx="802" cy="967.4" r="2.6" fill="#1c5aa0" stroke="#fff" stroke-width="0.8"/><circle cx="804.4" cy="969.4" r="2.6" fill="#2a9430" stroke="#fff" stroke-width="0.8"/><circle cx="796" cy="971.8" r="2.6" fill="#1c5aa0" stroke="#fff" stroke-width="0.8"/><circle cx="797.8" cy="972.4" r="2.6" fill="#1c5aa0" stroke="#fff" stroke-width="0.8"/><circle cx="777.8" cy="973" r="2.6" fill="#c8121a" stroke="#fff" stroke-width="0.8"/><circle cx="778.6" cy="974.2" r="2.6" fill="#c8121a" stroke="#fff" stroke-width="0.8"/><circle cx="785.8" cy="974.2" r="2.6" fill="#2a9430" stroke="#fff" stroke-width="0.8"/><circle cx="776.8" cy="976" r="2.6" fill="#1c5aa0" stroke="#fff" stroke-width="0.8"/><circle cx="779.8" cy="976.6" r="2.6" fill="#1c5aa0" stroke="#fff" stroke-width="0.8"/><circle cx="776.8" cy="979" r="2.6" fill="#1c5aa0" stroke="#fff" stroke-width="0.8"/><circle cx="764" cy="977.4" r="2.6" fill="#c8121a" stroke="#fff" stroke-width="0.8"/><circle cx="787.6" cy="976.6" r="2.6" fill="#c8121a" stroke="#fff" stroke-width="0.8"/><circle cx="785.8" cy="980.6" r="2.6" fill="#c8121a" stroke="#fff" stroke-width="0.8"/><circle cx="790.2" cy="980.2" r="2.6" fill="#1c5aa0" stroke="#fff" stroke-width="0.8"/><circle cx="793" cy="982.2" r="2.6" fill="#1c5aa0" stroke="#fff" stroke-width="0.8"/><circle cx="767.6" cy="984.2" r="2.6" fill="#1c5aa0" stroke="#fff" stroke-width="0.8"/><circle cx="780.2" cy="984.4" r="2.6" fill="#6e2f88" stroke="#fff" stroke-width="0.8"/><circle cx="789.4" cy="985.8" r="2.6" fill="#2a9430" stroke="#fff" stroke-width="0.8"/><circle cx="787.6" cy="984.4" r="2.6" fill="#2a9430" stroke="#fff" stroke-width="0.8"/><circle cx="344.4" cy="1001.3" r="2.6" fill="#2a9430" stroke="#fff" stroke-width="0.8"/><circle cx="348.6" cy="1003.2" r="2.6" fill="#2a9430" stroke="#fff" stroke-width="0.8"/><circle cx="361.2" cy="1001.3" r="2.6" fill="#1c5aa0" stroke="#fff" stroke-width="0.8"/><circle cx="345.8" cy="1015.8" r="2.6" fill="#1c5aa0" stroke="#fff" stroke-width="0.8"/><circle cx="347.8" cy="1017.8" r="2.6" fill="#1c5aa0" stroke="#fff" stroke-width="0.8"/><circle cx="589.5" cy="1001.3" r="2.6" fill="#2a9430" stroke="#fff" stroke-width="0.8"/><circle cx="602.9" cy="1003.2" r="2.6" fill="#2a9430" stroke="#fff" stroke-width="0.8"/><circle cx="615.5" cy="1001.3" r="2.6" fill="#1c5aa0" stroke="#fff" stroke-width="0.8"/><circle cx="592.8" cy="1015.8" r="2.6" fill="#1c5aa0" stroke="#fff" stroke-width="0.8"/><circle cx="599.3" cy="1017.8" r="2.6" fill="#1c5aa0" stroke="#fff" stroke-width="0.8"/></g></svg>
<div class="t" style="top:798.85px;font-size:14px;line-height:14px;color:#222;font-weight:normal;font-family:'Liberation Sans', sans-serif;right:1789.00px;-webkit-text-stroke:0;">20000</div>
<div class="t" style="top:838.05px;font-size:14px;line-height:14px;color:#222;font-weight:normal;font-family:'Liberation Sans', sans-serif;right:1789.00px;-webkit-text-stroke:0;">10000</div>
<div class="t" style="top:888.75px;font-size:14px;line-height:14px;color:#222;font-weight:normal;font-family:'Liberation Sans', sans-serif;right:1789.00px;-webkit-text-stroke:0;">2500</div>
<div class="t" style="top:923.35px;font-size:14px;line-height:14px;color:#222;font-weight:normal;font-family:'Liberation Sans', sans-serif;right:1789.00px;-webkit-text-stroke:0;">2000</div>
<div class="t" style="top:958.35px;font-size:14px;line-height:14px;color:#222;font-weight:normal;font-family:'Liberation Sans', sans-serif;right:1789.00px;-webkit-text-stroke:0;">1500</div>
<div class="t" style="left:161px;top:826px;font-size:14.5px;line-height:14.5px;color:#222;-webkit-text-stroke:0;transform:translate(-50%,-50%) rotate(-90deg);">Revenue</div>
<div class="t" style="left:170px;top:940px;font-size:14.5px;line-height:14.5px;color:#222;-webkit-text-stroke:0;transform:translate(-50%,-50%) rotate(-90deg);">Spend</div>
<div class="t" style="top:901.48px;font-size:14.2px;line-height:14.2px;color:#222;font-weight:normal;font-family:'Liberation Sans', sans-serif;left:1067.00px;-webkit-text-stroke:0;">Region</div>
<div class="r" style="left:1064.5px;top:924.9px;width:5px;height:5px;border-radius:50%;background:#c8121a;"></div>
<div class="t" style="top:920.38px;font-size:14.2px;line-height:14.2px;color:#222;font-weight:normal;font-family:'Liberation Sans', sans-serif;left:1089.00px;-webkit-text-stroke:0;">North</div>
<div class="r" style="left:1064.5px;top:943.8px;width:5px;height:5px;border-radius:50%;background:#1c5aa0;"></div>
<div class="t" style="top:939.28px;font-size:14.2px;line-height:14.2px;color:#222;font-weight:normal;font-family:'Liberation Sans', sans-serif;left:1089.00px;-webkit-text-stroke:0;">West</div>
<div class="r" style="left:1064.5px;top:962.7px;width:5px;height:5px;border-radius:50%;background:#2a9430;"></div>
<div class="t" style="top:958.18px;font-size:14.2px;line-height:14.2px;color:#222;font-weight:normal;font-family:'Liberation Sans', sans-serif;left:1089.00px;-webkit-text-stroke:0;">East</div>
<div class="r" style="left:1064.5px;top:981.6px;width:5px;height:5px;border-radius:50%;background:#6e2f88;"></div>
<div class="t" style="top:977.08px;font-size:14.2px;line-height:14.2px;color:#222;font-weight:normal;font-family:'Liberation Sans', sans-serif;left:1089.00px;-webkit-text-stroke:0;">South</div>
<div class="r" style="left:1230.00px;top:190.00px;width:770.00px;height:935.00px;background:#f0f0f0;"></div>
<div class="r" style="left:1246.00px;top:270.50px;width:737.00px;height:840.00px;background:#ebeaea;border-radius:3px;"></div>
<svg class="r" style="left:1246px;top:212px" width="50" height="50" viewBox="0 0 50 50">
<defs>
<linearGradient id="lg1" x1="0" y1="0" x2="0" y2="1"><stop offset="0" stop-color="#14a2f2"/><stop offset="0.3" stop-color="#1c8fd8"/><stop offset="0.62" stop-color="#7cc23c"/><stop offset="1" stop-color="#f6c90c"/></linearGradient>
<linearGradient id="lg2" x1="0.8" y1="0" x2="0.3" y2="1"><stop offset="0" stop-color="#a646ec"/><stop offset="0.45" stop-color="#f0529a"/><stop offset="0.75" stop-color="#fc6a78"/><stop offset="1" stop-color="#ffa048"/></linearGradient>
</defs>
<path d="M10.5 7.8 L28 7.8 C31.5 7.8 33.5 11 35.5 18.8 L24 19 L19.5 33.5 L8 33.5 C5.5 33.5 4.5 31 5 28.5 Z" fill="url(#lg1)"/>
<path d="M25 8 C30.5 7.6 33.5 11 35.5 18.8 L24.5 19 C25 14 26 10 25 8 Z" fill="#1d46c8"/>
<path d="M24 19 L29.8 19.2 L25 33.5 L19.5 33.5 Z" fill="#fff"/>
<path d="M29.5 19.2 L41 19.2 C43.6 19.2 44.4 21.8 43.7 24.6 L38.6 40 C37.8 42.4 36.2 43.4 34 43.4 L19.5 43.4 L24.8 33.5 Z" fill="url(#lg2)"/>
<path d="M13.5 33.2 L24.8 33.4 L20.5 43.4 L18.5 43.4 C16.5 43 15.2 39 13.5 33.2 Z" fill="#f04a22"/>
</svg>
<div class="t" style="top:220.18px;font-size:37px;line-height:37px;color:#1b1b1b;font-weight:normal;font-family:'Liberation Sans', sans-serif;left:1302.00px;">Copilot</div>
<svg class="r" style="left:1892px;top:234px;" width="25" height="14" viewBox="0 0 25 14"><path d="M1 1 L12.5 12.5 L24 1" fill="none" stroke="#222" stroke-width="2"/></svg>
<svg class="r" style="left:1953px;top:228px;" width="19" height="19" viewBox="0 0 19 19"><path d="M1 1 L18 18 M18 1 L1 18" stroke="#222" stroke-width="2"/></svg>
<div class="r" style="left:1438.00px;top:286.00px;width:486.00px;height:70.00px;background:#c9ebd9;border-radius:10px;"></div>
<div class="t" style="top:310.78px;font-size:23.3px;line-height:23.3px;color:#1b1b1b;font-weight:normal;font-family:'Liberation Sans', sans-serif;left:1459.00px;">Analyze my EV Charger Data using Python</div>
<div class="r" style="left:1273.50px;top:371.00px;width:650.50px;height:182.00px;background:#fff;border-radius:10px;box-shadow:0 1px 3px rgba(0,0,0,0.22),0 0 1px rgba(0,0,0,0.2);"></div>
<div class="t" style="top:400.51px;font-size:23.5px;line-height:23.5px;color:#1b1b1b;font-weight:normal;font-family:'Liberation Sans', sans-serif;left:1295.50px;">I can use Advanced Analysis for that. Here's what I'll do:</div>
<div class="r" style="left:1313px;top:447.6px;width:7px;height:7px;border-radius:50%;background:#1b1b1b;"></div>
<div class="t" style="top:438.45px;font-size:23.8px;line-height:23.8px;color:#1b1b1b;font-weight:normal;font-family:'Liberation Sans', sans-serif;left:1338.00px;">Create a new sheet for the results</div>
<div class="r" style="left:1313px;top:481.8px;width:7px;height:7px;border-radius:50%;background:#1b1b1b;"></div>
<div class="t" style="top:472.65px;font-size:23.8px;line-height:23.8px;color:#1b1b1b;font-weight:normal;font-family:'Liberation Sans', sans-serif;left:1338.00px;">Automatically write and insert Python formulas</div>
<div class="r" style="left:1313px;top:516.0px;width:7px;height:7px;border-radius:50%;background:#1b1b1b;"></div>
<div class="t" style="top:506.85px;font-size:23.8px;line-height:23.8px;color:#1b1b1b;font-weight:normal;font-family:'Liberation Sans', sans-serif;left:1338.00px;">Answer your prompt in multiple messages</div>
<div class="r" style="left:1273.50px;top:568.50px;width:650.50px;height:198.00px;background:#fff;border-radius:10px;box-shadow:0 1px 3px rgba(0,0,0,0.22),0 0 1px rgba(0,0,0,0.2);"></div>
<div class="t" style="top:597.37px;font-size:23.9px;line-height:23.9px;color:#1b1b1b;font-weight:normal;font-family:'Liberation Sans', sans-serif;left:1295.50px;">First, let's create a pair plot. This provides an overview of</div>
<div class="t" style="top:631.27px;font-size:23.9px;line-height:23.9px;color:#1b1b1b;font-weight:normal;font-family:'Liberation Sans', sans-serif;left:1295.50px;">relationships between variables, helps identify patterns</div>
<div class="t" style="top:665.17px;font-size:23.9px;line-height:23.9px;color:#1b1b1b;font-weight:normal;font-family:'Liberation Sans', sans-serif;left:1295.50px;">and outliers. What else would you like to explore?</div>
<div class="r" style="left:1295.50px;top:702.50px;width:312.00px;height:33.00px;background:#ececec;border-radius:5px;"></div>
<div class="t" style="top:710.86px;font-size:17.3px;line-height:17.3px;color:#5f5f5f;font-weight:normal;font-family:'Liberation Sans', sans-serif;left:1305.00px;">AI-generated content may be incorrect</div>
<svg class="r" style="left:1825px;top:703px;" width="30" height="32" viewBox="0 0 30 32"><path d="M16.25 4.75 C17.8 5.2 18.6 6.5 18.3 8.5 L17.75 13 L22 13.5 C23.4 13.8 24 15 23.6 16.5 L21 26 C20.5 27.3 19.3 27.8 18 27.5 L7.5 24.25 C5.5 23.5 4.6 21.8 4.9 20 C5.2 18.5 6 17.6 7 17 C9 15.8 10.5 14.5 11.5 13 C12.8 11 13.8 8.5 14.5 6.5 C14.9 5.2 15.5 4.6 16.25 4.75 Z" fill="none" stroke="#111" stroke-width="1.6" stroke-linejoin="round"/></svg>
<svg class="r" style="left:1868px;top:703px;" width="30" height="32" viewBox="0 0 30 32"><path d="M6.5 9.5 L18 6.25 C19.8 5.9 21.3 6.8 22 8.5 L24 16 C24.3 17.6 23.5 18.6 22 18.8 L18.75 19 L18.5 25 C18.3 26.6 17.6 27.5 16.5 27.5 C15.6 27.4 15 26.5 14.5 25 C13.8 23 13 21.3 12 20 C10.3 17.6 8.3 15.8 6.3 14.6 C5.2 13.9 5 12.8 5.25 11.8 C5.5 10.6 5.9 9.8 6.5 9.5 Z" fill="none" stroke="#111" stroke-width="1.6" stroke-linejoin="round"/></svg>
<div class="r" style="left:1265px;top:770px;width:670px;height:129.5px;overflow:hidden;">
<div class="r" style="left:8.5px;top:11.6px;width:650.5px;height:200px;background:#fff;border-radius:10px;box-shadow:0 1px 3px rgba(0,0,0,0.22),0 0 1px rgba(0,0,0,0.2);"></div>
</div>
<div class="t" style="top:808.74px;font-size:23.7px;line-height:23.7px;color:#1b1b1b;font-weight:normal;font-family:'Liberation Sans', sans-serif;left:1295.50px;">Here's what I inserted in </div>
<div class="t" style="top:808.74px;font-size:23.7px;line-height:23.7px;color:#13733b;font-weight:normal;font-family:'Liberation Sans', sans-serif;left:1555.00px;text-decoration:underline;text-underline-offset:3px;text-decoration-thickness:1.5px;">A22</div>
<div class="t" style="top:851.32px;font-size:11.2px;line-height:11.2px;color:#222;font-weight:normal;font-family:'Liberation Sans', sans-serif;left:1069.00px;width:1000px;text-align:center;-webkit-text-stroke:0;">Pair Plot of Revenue, Marketing Spend, and Units Sold by Region</div>
<svg class="r" style="left:0;top:0" width="2000" height="1125"><defs><clipPath id="mc"><rect x="1274" y="860" width="650" height="39.5"/></clipPath></defs><g clip-path="url(#mc)"><rect x="1338" y="863.6" width="138.0" height="60" fill="#eaeaf2"/><line x1="1372.5" y1="863.6" x2="1372.5" y2="900" stroke="#fff" stroke-opacity="0.45" stroke-width="0.8"/><line x1="1407.0" y1="863.6" x2="1407.0" y2="900" stroke="#fff" stroke-opacity="0.45" stroke-width="0.8"/><line x1="1441.5" y1="863.6" x2="1441.5" y2="900" stroke="#fff" stroke-opacity="0.45" stroke-width="0.8"/><line x1="1338" y1="883" x2="1476" y2="883" stroke="#fff" stroke-opacity="0.35" stroke-width="0.8"/><rect x="1487.5" y="863.6" width="138.5" height="60" fill="#eaeaf2"/><line x1="1522.1" y1="863.6" x2="1522.1" y2="900" stroke="#fff" stroke-opacity="0.45" stroke-width="0.8"/><line x1="1556.8" y1="863.6" x2="1556.8" y2="900" stroke="#fff" stroke-opacity="0.45" stroke-width="0.8"/><line x1="1591.4" y1="863.6" x2="1591.4" y2="900" stroke="#fff" stroke-opacity="0.45" stroke-width="0.8"/><line x1="1487.5" y1="883" x2="1626" y2="883" stroke="#fff" stroke-opacity="0.35" stroke-width="0.8"/><rect x="1638.4" y="863.6" width="138.6" height="60" fill="#eaeaf2"/><line x1="1673.1" y1="863.6" x2="1673.1" y2="900" stroke="#fff" stroke-opacity="0.45" stroke-width="0.8"/><line x1="1707.7" y1="863.6" x2="1707.7" y2="900" stroke="#fff" stroke-opacity="0.45" stroke-width="0.8"/><line x1="1742.3" y1="863.6" x2="1742.3" y2="900" stroke="#fff" stroke-opacity="0.45" stroke-width="0.8"/><line x1="1638.4" y1="883" x2="1777" y2="883" stroke="#fff" stroke-opacity="0.35" stroke-width="0.8"/><path d="M1380 900 C1390 890 1393 866 1399 866 C1405 866 1410 890 1422 900 Z" fill="#377eb8" fill-opacity="0.3" stroke="#377eb8" stroke-width="1"/><path d="M1384 900 C1392 890 1394 867 1398 867 C1402 867 1405 888 1414 900 Z" fill="#e41a1c" fill-opacity="0.35" stroke="#e41a1c" stroke-opacity="0.8" stroke-width="1"/><circle cx="1528" cy="866" r="1.5" fill="#377eb8"/><circle cx="1550" cy="896" r="1.5" fill="#984ea3"/><circle cx="1555" cy="895" r="1.5" fill="#e41a1c"/><circle cx="1570" cy="889" r="1.5" fill="#377eb8"/><circle cx="1575" cy="888" r="1.5" fill="#4daf4a"/><circle cx="1582" cy="886" r="1.5" fill="#377eb8"/><circle cx="1589" cy="882" r="1.5" fill="#377eb8"/><circle cx="1668" cy="896" r="1.5" fill="#984ea3"/><circle cx="1674" cy="895" r="1.5" fill="#e41a1c"/><circle cx="1683" cy="897" r="1.5" fill="#377eb8"/><circle cx="1716" cy="889" r="1.5" fill="#377eb8"/><circle cx="1722" cy="889" r="1.5" fill="#377eb8"/><circle cx="1731" cy="886" r="1.5" fill="#4daf4a"/><circle cx="1730" cy="882" r="1.5" fill="#377eb8"/><circle cx="1687" cy="866" r="1.5" fill="#377eb8"/></g></svg>
<div class="t" style="top:878.65px;font-size:7.5px;line-height:7.5px;color:#333;font-weight:normal;font-family:'Liberation Sans', sans-serif;left:1309.00px;-webkit-text-stroke:0;">20000</div>
<div class="t" style="left:1301px;top:889px;font-size:8px;line-height:8px;color:#333;transform:translate(-50%,-50%) rotate(-90deg);">Revenue</div>
<div class="r" style="left:1265.00px;top:899.50px;width:670.00px;height:5.50px;background:#ebebeb;"></div>
<div class="r" style="left:1270.00px;top:912.00px;width:658.00px;height:48.00px;background:#efefef;border:1px solid #dedede;border-radius:8px 8px 0 0;box-sizing:border-box;"></div>
<svg class="r" style="left:1288px;top:925.5px;" width="20" height="20" viewBox="0 0 20 20"><circle cx="10" cy="10" r="8.6" fill="none" stroke="#222" stroke-width="1.7"/><path d="M10 9 V15" stroke="#222" stroke-width="1.8"/><circle cx="10" cy="6" r="1.2" fill="#222"/></svg>
<div class="t" style="top:926.14px;font-size:17.2px;line-height:17.2px;color:#1b1b1b;font-weight:normal;font-family:'Liberation Sans', sans-serif;left:1322.00px;">Using</div>
<div class="t" style="top:925.97px;font-size:17.4px;line-height:17.4px;color:#1b1b1b;font-weight:normal;font-family:'Liberation Sans', sans-serif;left:1370.50px;text-decoration:underline;text-underline-offset:2px;">this workbook</div>
<svg class="r" style="left:1487px;top:932px;" width="11" height="7" viewBox="0 0 11 7"><path d="M1 1 L5.5 5.5 L10 1" fill="none" stroke="#222" stroke-width="1.7"/></svg>
<div class="r" style="left:1270.00px;top:957.00px;width:658.00px;height:123.00px;background:#fff;border:1px solid #e0e0e0;border-radius:8px;box-sizing:border-box;box-shadow:0 1px 2px rgba(0,0,0,0.08);"></div>
<div class="t" style="top:981.66px;font-size:19.3px;line-height:19.3px;color:#5c5c5c;font-weight:normal;font-family:'Liberation Sans', sans-serif;left:1282.50px;">Type a message for Advanced Analysis</div>
<svg class="r" style="left:1779px;top:1037px;" width="21" height="24" viewBox="0 0 21 24"><path d="M2 20.5 V3.2 C2 1.9 2.9 1 4.2 1 H16.8 C18.1 1 19 1.9 19 3.2 V18.6 H4.2 C2.9 18.6 2 19.4 2 20.5 C2 21.6 2.9 22.4 4.2 22.4 H19" fill="none" stroke="#111" stroke-width="1.6" stroke-linejoin="round"/><rect x="5.4" y="4.3" width="9.8" height="3.2" rx="1.6" fill="none" stroke="#111" stroke-width="1.4"/></svg>
<div class="r" style="left:1813.00px;top:1035.00px;width:1.00px;height:28.00px;background:#d9d9d9;"></div>
<svg class="r" style="left:1833px;top:1037px;" width="18" height="25" viewBox="0 0 18 25"><rect x="5" y="1" width="8" height="15" rx="4" fill="none" stroke="#222" stroke-width="1.7"/><path d="M1.5 11 C1.5 16 5 19 9 19 C13 19 16.5 16 16.5 11 M9 19 V24" fill="none" stroke="#222" stroke-width="1.7"/></svg>
<svg class="r" style="left:1882px;top:1039px;" width="24" height="22" viewBox="0 0 24 22"><path d="M1.5 1.5 L22 11 L1.5 20.5 L4.5 11 Z M4.5 11 H12" fill="none" stroke="#b5b5b5" stroke-width="1.6" stroke-linejoin="round"/></svg>
<div class="r" style="left:1952.00px;top:278.00px;width:31.00px;height:823.00px;background:#fbfbfb;"></div>
<svg class="r" style="left:1958px;top:290px;" width="18" height="11" viewBox="0 0 18 11"><path d="M9 0 L18 11 H0 Z" fill="#777" stroke="#777" stroke-width="2" stroke-linejoin="round"/></svg>
<div class="r" style="left:1959.00px;top:962.00px;width:17.00px;height:36.00px;background:#777;border-radius:8px;"></div>
<svg class="r" style="left:1958px;top:1078px;" width="18" height="11" viewBox="0 0 18 11"><path d="M0 0 H18 L9 11 Z" fill="#777" stroke="#777" stroke-width="2" stroke-linejoin="round"/></svg>
</body></html>
